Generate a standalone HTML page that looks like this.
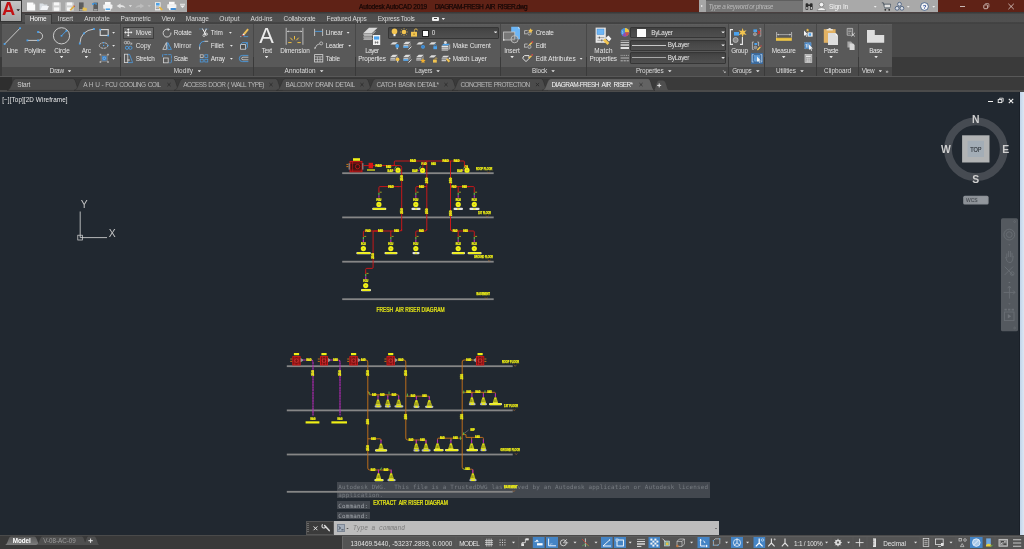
<!DOCTYPE html>
<html>
<head>
<meta charset="utf-8">
<title>Autodesk AutoCAD 2019 - DIAGRAM-FRESH AIR RISER.dwg</title>
<style>
html,body{margin:0;padding:0;}
body{width:1024px;height:549px;overflow:hidden;background:#212830;position:relative;font-family:"Liberation Sans",sans-serif;font-size:6.4px;color:#e6e6e6;}
.abs{position:absolute;}
#app{position:absolute;left:0;top:0;width:1024px;height:549px;overflow:hidden;will-change:transform;}
.t{position:absolute;white-space:nowrap;line-height:8px;height:8px;}
/* title */
#title{left:0;top:0;width:1024px;height:13px;background:#5f2216;}
#qat{left:22.2px;top:0;width:164.8px;height:12.2px;background:#a9a9a9;}
#abtn{left:0;top:0;width:22px;height:22px;background:linear-gradient(#c6c6c6,#a4a4a4);border:1px solid #353535;border-top-width:0.8px;box-sizing:border-box;}
#tabrow{left:0;top:12.4px;width:1024px;height:11.6px;background:linear-gradient(#383838 0,#3c3c3c 0.8px,#4f4f4f 2.4px,#505050 9.6px,#424242 10.6px,#424242 11.6px);}
#ribbon{left:0;top:24px;width:1024px;height:52.4px;background:#484848;}
.panel{position:absolute;top:24px;height:42.8px;background:linear-gradient(#606060 0,#595959 1.6px,#595959 100%);}
.ptitle{position:absolute;top:66.8px;height:9px;background:#494949;}
.pt{position:absolute;top:67px;line-height:8px;height:8px;white-space:nowrap;color:#dcdcdc;}
.dd{position:absolute;width:3.6px;height:2.1px;margin-left:-0.1px;background:#e6e6e6;clip-path:polygon(0 0,100% 0,50% 100%);}
#filetabs{left:0;top:76px;width:1024px;height:16.4px;background:linear-gradient(#585858 0,#585858 1px,#3a3a3a 1.2px);}
#draw{left:0;top:92.4px;width:1024px;height:443px;background:#212830;}
#status{left:0;top:535.3px;width:1024px;height:13.7px;background:linear-gradient(#4a4a4a 0,#4a4a4a 0.8px,#393939 1px);}
</style>
</head>
<body>
<div id="app">

<!-- ================= DRAWING AREA ================= -->
<div id="draw" class="abs"></div>
<div class="abs" style="left:337px;top:482.3px;width:373px;height:15.6px;background:rgba(88,92,98,0.62);"></div>
<div class="abs" style="left:337px;top:501.2px;width:32.5px;height:7.4px;background:rgba(88,92,98,0.62);"></div>
<div class="abs" style="left:337px;top:512px;width:32.5px;height:7.4px;background:rgba(88,92,98,0.62);"></div>
<div class="t" style="left:338.2px;top:483px;font-family:'DejaVu Sans Mono','Liberation Mono',monospace;font-size:5.9px;color:#777c82;white-space:pre;letter-spacing:0.191px">Autodesk DWG.  This file is a TrustedDWG last saved by an Autodesk application or Autodesk licensed</div>
<div class="t" style="left:338.2px;top:490.7px;font-family:'DejaVu Sans Mono','Liberation Mono',monospace;font-size:5.9px;color:#777c82;letter-spacing:0.203px">application.</div>
<div class="t" style="left:338.2px;top:501.5px;font-family:'DejaVu Sans Mono','Liberation Mono',monospace;font-size:5.9px;color:#777c82;color:#a0a5ab;letter-spacing:0.203px">Command:</div>
<div class="t" style="left:338.2px;top:512.3px;font-family:'DejaVu Sans Mono','Liberation Mono',monospace;font-size:5.9px;color:#777c82;color:#a0a5ab;letter-spacing:0.203px">Command:</div>
<!--DIAGRAM-START-->
<svg class="abs" style="left:280px;top:150px;" width="250" height="370" viewBox="280 150 250 370" font-family="Liberation Sans, sans-serif">
<rect x="342.2" y="172.29999999999998" width="151.5" height="1.8" fill="#868686"/>
<rect x="342.2" y="216.5" width="151.5" height="1.8" fill="#868686"/>
<rect x="342.2" y="260.8" width="151.5" height="1.8" fill="#868686"/>
<rect x="342.2" y="298.3" width="151.5" height="1.8" fill="#868686"/>
<rect x="350" y="161.4" width="12" height="10.4" fill="#3a1212" stroke="#d81616" stroke-width="0.9"/>
<path d="M352.6 161.4 v10.4 M350 163 h12 M350 170.2 h12" stroke="#d81616" stroke-width="0.6"/>
<circle cx="357.6" cy="166.6" r="2.2" fill="none" stroke="#d81616" stroke-width="0.7"/>
<rect x="348.6" y="163.2" width="1.2" height="6.4" fill="#8a8a8a"/><rect x="362.2" y="163.2" width="1.2" height="6.4" fill="#8a8a8a"/>
<path d="M346.4 164.4 h2 M346.4 166.6 h2" stroke="#d07818" stroke-width="1"/>
<rect x="353" y="158.2" width="7" height="2.6" fill="#f0f016"/>
<path d="M363.4 165.6 L394.3 165.6" fill="none" stroke="#d81616" stroke-width="0.9" stroke-linejoin="round"/>
<rect x="368.6" y="162.8" width="4.4" height="5.6" fill="#d81616"/>
<rect x="367" y="169.4" width="8" height="1.2" fill="#f0f016"/>
<rect x="375.52000000000004" y="164.65" width="6.16" height="1.9" fill="#f0f016" fill-opacity="0.45"/>
<text x="378.6" y="166.6" text-anchor="middle" font-size="2.9" font-weight="bold" fill="#f0f016" stroke="#f0f016" stroke-width="0.2" textLength="6.16" lengthAdjust="spacingAndGlyphs">FAD</text>
<path d="M394.3 165.6 V162 Q394.3 161 395.3 161 H463.4 Q464.4 161 464.4 162 V167.4" fill="none" stroke="#d81616" stroke-width="0.9"/>
<path d="M386 165.6 H399.7 Q401.7 165.6 401.7 167.6 V231.2" fill="none" stroke="#d81616" stroke-width="0.9"/>
<path d="M426.8 161 L426.8 230.2" fill="none" stroke="#d81616" stroke-width="0.9" stroke-linejoin="round"/>
<path d="M450.5 161 L450.5 230.2" fill="none" stroke="#d81616" stroke-width="0.9" stroke-linejoin="round"/>
<rect x="409.92" y="160.05" width="6.16" height="1.9" fill="#f0f016" fill-opacity="0.45"/>
<text x="413" y="162.0" text-anchor="middle" font-size="2.9" font-weight="bold" fill="#f0f016" stroke="#f0f016" stroke-width="0.2" textLength="6.16" lengthAdjust="spacingAndGlyphs">FAD</text>
<rect x="442.52000000000004" y="160.05" width="6.16" height="1.9" fill="#f0f016" fill-opacity="0.45"/>
<text x="445.6" y="162.0" text-anchor="middle" font-size="2.9" font-weight="bold" fill="#f0f016" stroke="#f0f016" stroke-width="0.2" textLength="6.16" lengthAdjust="spacingAndGlyphs">FAD</text>
<rect x="453.78400000000005" y="160.05" width="5.632000000000001" height="1.9" fill="#f0f016" fill-opacity="0.45"/>
<text x="456.6" y="162.0" text-anchor="middle" font-size="2.9" font-weight="bold" fill="#f0f016" stroke="#f0f016" stroke-width="0.2" textLength="5.632000000000001" lengthAdjust="spacingAndGlyphs">FAD</text>
<circle cx="398" cy="170.2" r="2.6" fill="#f0f016"/><circle cx="398" cy="170.2" r="0.7" fill="#b4b430"/>
<path d="M394.6 168.6 l1.6 -2.4" stroke="#58b848" stroke-width="1"/><path d="M393.8 171.0 l1 -1.6" stroke="#b52ab6" stroke-width="1"/>
<circle cx="422.6" cy="170.4" r="2.6" fill="#f0f016"/><circle cx="422.6" cy="170.4" r="0.7" fill="#b4b430"/>
<path d="M419.20000000000005 168.8 l1.6 -2.4" stroke="#58b848" stroke-width="1"/><path d="M418.40000000000003 171.20000000000002 l1 -1.6" stroke="#b52ab6" stroke-width="1"/>
<circle cx="467" cy="170.2" r="2.6" fill="#f0f016"/><circle cx="467" cy="170.2" r="0.7" fill="#b4b430"/>
<path d="M463.6 168.6 l1.6 -2.4" stroke="#58b848" stroke-width="1"/><path d="M462.8 171.0 l1 -1.6" stroke="#b52ab6" stroke-width="1"/>
<rect x="385.96000000000004" y="166.25" width="5.28" height="1.9" fill="#f0f016" fill-opacity="0.45"/>
<text x="388.6" y="168.2" text-anchor="middle" font-size="2.9" font-weight="bold" fill="#f0f016" stroke="#f0f016" stroke-width="0.2" textLength="5.28" lengthAdjust="spacingAndGlyphs">FAD</text>
<rect x="387.584" y="170.45000000000002" width="5.632000000000001" height="1.9" fill="#f0f016" fill-opacity="0.45"/>
<text x="390.4" y="172.4" text-anchor="middle" font-size="2.9" font-weight="bold" fill="#f0f016" stroke="#f0f016" stroke-width="0.2" textLength="5.632000000000001" lengthAdjust="spacingAndGlyphs">EAF</text>
<rect x="421.536" y="163.05" width="4.928" height="1.9" fill="#f0f016" fill-opacity="0.45"/>
<text x="424" y="165.0" text-anchor="middle" font-size="2.9" font-weight="bold" fill="#f0f016" stroke="#f0f016" stroke-width="0.2" textLength="4.928" lengthAdjust="spacingAndGlyphs">FAD</text>
<rect x="431.136" y="163.25" width="4.928" height="1.9" fill="#f0f016" fill-opacity="0.45"/>
<text x="433.6" y="165.2" text-anchor="middle" font-size="2.9" font-weight="bold" fill="#f0f016" stroke="#f0f016" stroke-width="0.2" textLength="4.928" lengthAdjust="spacingAndGlyphs">FAD</text>
<rect x="412.184" y="170.45000000000002" width="5.632000000000001" height="1.9" fill="#f0f016" fill-opacity="0.45"/>
<text x="415" y="172.4" text-anchor="middle" font-size="2.9" font-weight="bold" fill="#f0f016" stroke="#f0f016" stroke-width="0.2" textLength="5.632000000000001" lengthAdjust="spacingAndGlyphs">EAF</text>
<rect x="457.184" y="170.45000000000002" width="5.632000000000001" height="1.9" fill="#f0f016" fill-opacity="0.45"/>
<text x="460" y="172.4" text-anchor="middle" font-size="2.9" font-weight="bold" fill="#f0f016" stroke="#f0f016" stroke-width="0.2" textLength="5.632000000000001" lengthAdjust="spacingAndGlyphs">EAF</text>
<rect x="464.816" y="165.65" width="3.168" height="1.9" fill="#f0f016" fill-opacity="0.45"/>
<text x="466.4" y="167.6" text-anchor="middle" font-size="2.9" font-weight="bold" fill="#f0f016" stroke="#f0f016" stroke-width="0.2" textLength="3.168" lengthAdjust="spacingAndGlyphs">FA</text>
<path d="M422.6 168 L423.4 162.4" fill="none" stroke="#d81616" stroke-width="0.7" stroke-linejoin="round"/>
<path d="M466.4 168 L464.4 165" fill="none" stroke="#d81616" stroke-width="0.7" stroke-linejoin="round"/>
<rect x="400.7" y="175.24" width="2" height="5.5200000000000005" fill="#f0f016" fill-opacity="0.5"/>
<text transform="translate(402.84999999999997 178) rotate(-90)" text-anchor="middle" font-size="2.9" font-weight="bold" fill="#f0f016" stroke="#f0f016" stroke-width="0.2" textLength="5.5200000000000005" lengthAdjust="spacingAndGlyphs">250</text>
<rect x="425.8" y="177.64000000000001" width="2" height="5.5200000000000005" fill="#f0f016" fill-opacity="0.5"/>
<text transform="translate(427.95 180.4) rotate(-90)" text-anchor="middle" font-size="2.9" font-weight="bold" fill="#f0f016" stroke="#f0f016" stroke-width="0.2" textLength="5.5200000000000005" lengthAdjust="spacingAndGlyphs">250</text>
<rect x="449.5" y="177.64000000000001" width="2" height="5.5200000000000005" fill="#f0f016" fill-opacity="0.5"/>
<text transform="translate(451.65 180.4) rotate(-90)" text-anchor="middle" font-size="2.9" font-weight="bold" fill="#f0f016" stroke="#f0f016" stroke-width="0.2" textLength="5.5200000000000005" lengthAdjust="spacingAndGlyphs">250</text>
<rect x="400.7" y="208.24" width="2" height="5.5200000000000005" fill="#f0f016" fill-opacity="0.5"/>
<text transform="translate(402.84999999999997 211) rotate(-90)" text-anchor="middle" font-size="2.9" font-weight="bold" fill="#f0f016" stroke="#f0f016" stroke-width="0.2" textLength="5.5200000000000005" lengthAdjust="spacingAndGlyphs">250</text>
<rect x="425.8" y="208.44" width="2" height="5.5200000000000005" fill="#f0f016" fill-opacity="0.5"/>
<text transform="translate(427.95 211.2) rotate(-90)" text-anchor="middle" font-size="2.9" font-weight="bold" fill="#f0f016" stroke="#f0f016" stroke-width="0.2" textLength="5.5200000000000005" lengthAdjust="spacingAndGlyphs">250</text>
<rect x="449.5" y="210.44" width="2" height="5.5200000000000005" fill="#f0f016" fill-opacity="0.5"/>
<text transform="translate(451.65 213.2) rotate(-90)" text-anchor="middle" font-size="2.9" font-weight="bold" fill="#f0f016" stroke="#f0f016" stroke-width="0.2" textLength="5.5200000000000005" lengthAdjust="spacingAndGlyphs">250</text>
<path d="M401.7 186.6 H379.9 Q378.9 186.6 378.9 187.6 V191.4" fill="none" stroke="#d81616" stroke-width="0.9"/>
<path d="M426.8 186.6 H416.8 Q415.8 186.6 415.8 187.6 V191.4" fill="none" stroke="#d81616" stroke-width="0.9"/>
<path d="M450.5 186.6 H473.3 Q474.3 186.6 474.3 187.6 V191.4 M458.2 186.6 V191.4" fill="none" stroke="#d81616" stroke-width="0.9"/>
<rect x="388.36" y="185.65" width="5.28" height="1.9" fill="#f0f016" fill-opacity="0.45"/>
<text x="391" y="187.6" text-anchor="middle" font-size="2.9" font-weight="bold" fill="#f0f016" stroke="#f0f016" stroke-width="0.2" textLength="5.28" lengthAdjust="spacingAndGlyphs">FAD</text>
<rect x="418.96000000000004" y="185.85000000000002" width="5.28" height="1.9" fill="#f0f016" fill-opacity="0.45"/>
<text x="421.6" y="187.8" text-anchor="middle" font-size="2.9" font-weight="bold" fill="#f0f016" stroke="#f0f016" stroke-width="0.2" textLength="5.28" lengthAdjust="spacingAndGlyphs">FAD</text>
<rect x="451.712" y="185.65" width="4.5760000000000005" height="1.9" fill="#f0f016" fill-opacity="0.45"/>
<text x="454" y="187.6" text-anchor="middle" font-size="2.9" font-weight="bold" fill="#f0f016" stroke="#f0f016" stroke-width="0.2" textLength="4.5760000000000005" lengthAdjust="spacingAndGlyphs">FAD</text>
<rect x="462.136" y="185.65" width="4.928" height="1.9" fill="#f0f016" fill-opacity="0.45"/>
<text x="464.6" y="187.6" text-anchor="middle" font-size="2.9" font-weight="bold" fill="#f0f016" stroke="#f0f016" stroke-width="0.2" textLength="4.928" lengthAdjust="spacingAndGlyphs">FAD</text>
<path d="M396.6 186.6 l1.8 -0.9 v1.8 Z M470 186.6 l-1.8 -0.9 v1.8 Z" fill="#d81616"/>
<path d="M378.9 190.6 v2.2" stroke="#d81616" stroke-width="0.9"/>
<path d="M378.9 192.79999999999998 v2.4" stroke="#58b848" stroke-width="1.2"/>
<path d="M378.9 195.2 v2.6" stroke="#b52ab6" stroke-width="1.2"/>
<path d="M379.7 192.2 h2" stroke="#f0f016" stroke-width="0.6"/>
<rect x="376.436" y="199.05" width="4.928" height="1.9" fill="#f0f016" fill-opacity="0.45"/>
<text x="378.9" y="201.0" text-anchor="middle" font-size="2.9" font-weight="bold" fill="#f0f016" stroke="#f0f016" stroke-width="0.2" textLength="4.928" lengthAdjust="spacingAndGlyphs">FCU</text>
<circle cx="378.9" cy="204.4" r="2.6" fill="#f0f016"/>
<circle cx="378.9" cy="204.4" r="0.7" fill="#b4b430"/>
<rect x="372.2" y="207.8" width="14.100000000000023" height="2.2" rx="1" fill="#e6e6d0"/>
<rect x="373.0" y="208.0" width="12.500000000000023" height="1.8" fill="#f0f016"/>
<path d="M415.8 190.6 v2.2" stroke="#d81616" stroke-width="0.9"/>
<path d="M415.8 192.79999999999998 v2.4" stroke="#58b848" stroke-width="1.2"/>
<path d="M415.8 195.2 v2.6" stroke="#b52ab6" stroke-width="1.2"/>
<path d="M416.6 192.2 h2" stroke="#f0f016" stroke-width="0.6"/>
<rect x="413.336" y="199.05" width="4.928" height="1.9" fill="#f0f016" fill-opacity="0.45"/>
<text x="415.8" y="201.0" text-anchor="middle" font-size="2.9" font-weight="bold" fill="#f0f016" stroke="#f0f016" stroke-width="0.2" textLength="4.928" lengthAdjust="spacingAndGlyphs">FCU</text>
<circle cx="415.8" cy="204.4" r="2.6" fill="#f0f016"/>
<circle cx="415.8" cy="204.4" r="0.7" fill="#b4b430"/>
<rect x="411.4" y="207.8" width="9.200000000000045" height="2.2" rx="1.1" fill="#e4e4e4"/>
<rect x="414.8" y="208.20000000000002" width="2.4" height="1.4" fill="#f0f016"/>
<path d="M458.2 190.6 v2.2" stroke="#d81616" stroke-width="0.9"/>
<path d="M458.2 192.79999999999998 v2.4" stroke="#58b848" stroke-width="1.2"/>
<path d="M458.2 195.2 v2.6" stroke="#b52ab6" stroke-width="1.2"/>
<path d="M459.0 192.2 h2" stroke="#f0f016" stroke-width="0.6"/>
<rect x="455.736" y="199.05" width="4.928" height="1.9" fill="#f0f016" fill-opacity="0.45"/>
<text x="458.2" y="201.0" text-anchor="middle" font-size="2.9" font-weight="bold" fill="#f0f016" stroke="#f0f016" stroke-width="0.2" textLength="4.928" lengthAdjust="spacingAndGlyphs">FCU</text>
<circle cx="458.2" cy="204.4" r="2.6" fill="#f0f016"/>
<circle cx="458.2" cy="204.4" r="0.7" fill="#b4b430"/>
<rect x="453.5" y="207.8" width="9.5" height="2.2" rx="1.1" fill="#e4e4e4"/>
<rect x="457.05" y="208.20000000000002" width="2.4" height="1.4" fill="#f0f016"/>
<path d="M474.3 190.6 v2.2" stroke="#d81616" stroke-width="0.9"/>
<path d="M474.3 192.79999999999998 v2.4" stroke="#58b848" stroke-width="1.2"/>
<path d="M474.3 195.2 v2.6" stroke="#b52ab6" stroke-width="1.2"/>
<path d="M475.1 192.2 h2" stroke="#f0f016" stroke-width="0.6"/>
<rect x="471.836" y="199.05" width="4.928" height="1.9" fill="#f0f016" fill-opacity="0.45"/>
<text x="474.3" y="201.0" text-anchor="middle" font-size="2.9" font-weight="bold" fill="#f0f016" stroke="#f0f016" stroke-width="0.2" textLength="4.928" lengthAdjust="spacingAndGlyphs">FCU</text>
<circle cx="474.3" cy="204.4" r="2.6" fill="#f0f016"/>
<circle cx="474.3" cy="204.4" r="0.7" fill="#b4b430"/>
<rect x="469.4" y="207.8" width="10.200000000000045" height="2.2" rx="1.1" fill="#e4e4e4"/>
<rect x="473.3" y="208.20000000000002" width="2.4" height="1.4" fill="#f0f016"/>
<path d="M401.7 229 Q401.7 231 399.7 231 H364.4 Q363.4 231 363.4 232 V235.6 M390.8 231 V235.6" fill="none" stroke="#d81616" stroke-width="0.9"/>
<path d="M426.8 229 Q426.8 231 424.8 231 H416.8 Q415.8 231 415.8 232 V235.6" fill="none" stroke="#d81616" stroke-width="0.9"/>
<path d="M450.5 229 Q450.5 231 452.5 231 H473.3 Q474.3 231 474.3 232 V235.6 M458.2 231 V235.6" fill="none" stroke="#d81616" stroke-width="0.9"/>
<path d="M378 231 H374.1 Q373.1 231 373.1 232 V267.4 Q373.1 268.4 372.1 268.4 H366.7 Q365.7 268.4 365.7 269.4 V272.6" fill="none" stroke="#d81616" stroke-width="0.9"/>
<rect x="365.536" y="230.05" width="4.928" height="1.9" fill="#f0f016" fill-opacity="0.45"/>
<text x="368" y="232.0" text-anchor="middle" font-size="2.9" font-weight="bold" fill="#f0f016" stroke="#f0f016" stroke-width="0.2" textLength="4.928" lengthAdjust="spacingAndGlyphs">FAD</text>
<rect x="378.048" y="230.05" width="5.104" height="1.9" fill="#f0f016" fill-opacity="0.45"/>
<text x="380.6" y="232.0" text-anchor="middle" font-size="2.9" font-weight="bold" fill="#f0f016" stroke="#f0f016" stroke-width="0.2" textLength="5.104" lengthAdjust="spacingAndGlyphs">FAD</text>
<rect x="394.136" y="230.05" width="4.928" height="1.9" fill="#f0f016" fill-opacity="0.45"/>
<text x="396.6" y="232.0" text-anchor="middle" font-size="2.9" font-weight="bold" fill="#f0f016" stroke="#f0f016" stroke-width="0.2" textLength="4.928" lengthAdjust="spacingAndGlyphs">FAD</text>
<rect x="418.936" y="230.05" width="4.928" height="1.9" fill="#f0f016" fill-opacity="0.45"/>
<text x="421.4" y="232.0" text-anchor="middle" font-size="2.9" font-weight="bold" fill="#f0f016" stroke="#f0f016" stroke-width="0.2" textLength="4.928" lengthAdjust="spacingAndGlyphs">FAD</text>
<rect x="452.712" y="230.05" width="4.5760000000000005" height="1.9" fill="#f0f016" fill-opacity="0.45"/>
<text x="455" y="232.0" text-anchor="middle" font-size="2.9" font-weight="bold" fill="#f0f016" stroke="#f0f016" stroke-width="0.2" textLength="4.5760000000000005" lengthAdjust="spacingAndGlyphs">FAD</text>
<rect x="463.136" y="230.05" width="4.928" height="1.9" fill="#f0f016" fill-opacity="0.45"/>
<text x="465.6" y="232.0" text-anchor="middle" font-size="2.9" font-weight="bold" fill="#f0f016" stroke="#f0f016" stroke-width="0.2" textLength="4.928" lengthAdjust="spacingAndGlyphs">FAD</text>
<path d="M363.4 234.8 v2.2" stroke="#d81616" stroke-width="0.9"/>
<path d="M363.4 237.0 v2.4" stroke="#58b848" stroke-width="1.2"/>
<path d="M363.4 239.4 v2.6" stroke="#b52ab6" stroke-width="1.2"/>
<path d="M364.2 236.4 h2" stroke="#f0f016" stroke-width="0.6"/>
<rect x="360.936" y="243.25000000000003" width="4.928" height="1.9" fill="#f0f016" fill-opacity="0.45"/>
<text x="363.4" y="245.20000000000002" text-anchor="middle" font-size="2.9" font-weight="bold" fill="#f0f016" stroke="#f0f016" stroke-width="0.2" textLength="4.928" lengthAdjust="spacingAndGlyphs">FCU</text>
<circle cx="363.4" cy="248.60000000000002" r="2.6" fill="#f0f016"/>
<circle cx="363.4" cy="248.60000000000002" r="0.7" fill="#b4b430"/>
<rect x="356.3" y="252.00000000000003" width="14.5" height="2.2" rx="1" fill="#e6e6d0"/>
<rect x="357.1" y="252.20000000000002" width="12.9" height="1.8" fill="#f0f016"/>
<path d="M390.8 234.8 v2.2" stroke="#d81616" stroke-width="0.9"/>
<path d="M390.8 237.0 v2.4" stroke="#58b848" stroke-width="1.2"/>
<path d="M390.8 239.4 v2.6" stroke="#b52ab6" stroke-width="1.2"/>
<path d="M391.6 236.4 h2" stroke="#f0f016" stroke-width="0.6"/>
<rect x="388.336" y="243.25000000000003" width="4.928" height="1.9" fill="#f0f016" fill-opacity="0.45"/>
<text x="390.8" y="245.20000000000002" text-anchor="middle" font-size="2.9" font-weight="bold" fill="#f0f016" stroke="#f0f016" stroke-width="0.2" textLength="4.928" lengthAdjust="spacingAndGlyphs">FCU</text>
<circle cx="390.8" cy="248.60000000000002" r="2.6" fill="#f0f016"/>
<circle cx="390.8" cy="248.60000000000002" r="0.7" fill="#b4b430"/>
<rect x="384.5" y="252.00000000000003" width="13.0" height="2.2" rx="1" fill="#e6e6d0"/>
<rect x="385.3" y="252.20000000000002" width="11.4" height="1.8" fill="#f0f016"/>
<path d="M415.8 234.8 v2.2" stroke="#d81616" stroke-width="0.9"/>
<path d="M415.8 237.0 v2.4" stroke="#58b848" stroke-width="1.2"/>
<path d="M415.8 239.4 v2.6" stroke="#b52ab6" stroke-width="1.2"/>
<path d="M416.6 236.4 h2" stroke="#f0f016" stroke-width="0.6"/>
<rect x="413.336" y="243.25000000000003" width="4.928" height="1.9" fill="#f0f016" fill-opacity="0.45"/>
<text x="415.8" y="245.20000000000002" text-anchor="middle" font-size="2.9" font-weight="bold" fill="#f0f016" stroke="#f0f016" stroke-width="0.2" textLength="4.928" lengthAdjust="spacingAndGlyphs">FCU</text>
<circle cx="415.8" cy="248.60000000000002" r="2.6" fill="#f0f016"/>
<circle cx="415.8" cy="248.60000000000002" r="0.7" fill="#b4b430"/>
<rect x="412.4" y="252.00000000000003" width="7.2000000000000455" height="2.2" rx="1.1" fill="#e4e4e4"/>
<rect x="414.8" y="252.40000000000003" width="2.4" height="1.4" fill="#f0f016"/>
<path d="M458.2 234.8 v2.2" stroke="#d81616" stroke-width="0.9"/>
<path d="M458.2 237.0 v2.4" stroke="#58b848" stroke-width="1.2"/>
<path d="M458.2 239.4 v2.6" stroke="#b52ab6" stroke-width="1.2"/>
<path d="M459.0 236.4 h2" stroke="#f0f016" stroke-width="0.6"/>
<rect x="455.736" y="243.25000000000003" width="4.928" height="1.9" fill="#f0f016" fill-opacity="0.45"/>
<text x="458.2" y="245.20000000000002" text-anchor="middle" font-size="2.9" font-weight="bold" fill="#f0f016" stroke="#f0f016" stroke-width="0.2" textLength="4.928" lengthAdjust="spacingAndGlyphs">FCU</text>
<circle cx="458.2" cy="248.60000000000002" r="2.6" fill="#f0f016"/>
<circle cx="458.2" cy="248.60000000000002" r="0.7" fill="#b4b430"/>
<rect x="451.6" y="252.00000000000003" width="13.399999999999977" height="2.2" rx="1" fill="#e6e6d0"/>
<rect x="452.40000000000003" y="252.20000000000002" width="11.799999999999978" height="1.8" fill="#f0f016"/>
<path d="M474.3 234.8 v2.2" stroke="#d81616" stroke-width="0.9"/>
<path d="M474.3 237.0 v2.4" stroke="#58b848" stroke-width="1.2"/>
<path d="M474.3 239.4 v2.6" stroke="#b52ab6" stroke-width="1.2"/>
<path d="M475.1 236.4 h2" stroke="#f0f016" stroke-width="0.6"/>
<rect x="471.836" y="243.25000000000003" width="4.928" height="1.9" fill="#f0f016" fill-opacity="0.45"/>
<text x="474.3" y="245.20000000000002" text-anchor="middle" font-size="2.9" font-weight="bold" fill="#f0f016" stroke="#f0f016" stroke-width="0.2" textLength="4.928" lengthAdjust="spacingAndGlyphs">FCU</text>
<circle cx="474.3" cy="248.60000000000002" r="2.6" fill="#f0f016"/>
<circle cx="474.3" cy="248.60000000000002" r="0.7" fill="#b4b430"/>
<rect x="467.6" y="252.00000000000003" width="14.0" height="2.2" rx="1" fill="#e6e6d0"/>
<rect x="468.40000000000003" y="252.20000000000002" width="12.4" height="1.8" fill="#f0f016"/>
<rect x="372.1" y="253.24" width="2" height="5.5200000000000005" fill="#f0f016" fill-opacity="0.5"/>
<text transform="translate(374.25 256) rotate(-90)" text-anchor="middle" font-size="2.9" font-weight="bold" fill="#f0f016" stroke="#f0f016" stroke-width="0.2" textLength="5.5200000000000005" lengthAdjust="spacingAndGlyphs">250</text>
<path d="M365.7 271.8 v2.2" stroke="#d81616" stroke-width="0.9"/>
<path d="M365.7 274.0 v2.4" stroke="#58b848" stroke-width="1.2"/>
<path d="M365.7 276.40000000000003 v2.6" stroke="#b52ab6" stroke-width="1.2"/>
<path d="M366.5 273.40000000000003 h2" stroke="#f0f016" stroke-width="0.6"/>
<rect x="363.236" y="280.25" width="4.928" height="1.9" fill="#f0f016" fill-opacity="0.45"/>
<text x="365.7" y="282.2" text-anchor="middle" font-size="2.9" font-weight="bold" fill="#f0f016" stroke="#f0f016" stroke-width="0.2" textLength="4.928" lengthAdjust="spacingAndGlyphs">FCU</text>
<circle cx="365.7" cy="285.6" r="2.6" fill="#f0f016"/>
<circle cx="365.7" cy="285.6" r="0.7" fill="#b4b430"/>
<rect x="361" y="289.0" width="10" height="2.2" rx="1" fill="#e6e6d0"/>
<rect x="361.8" y="289.20000000000005" width="8.4" height="1.8" fill="#f0f016"/>
<text x="476" y="169.5" font-size="3.2" font-weight="bold" fill="#f0f016" stroke="#f0f016" stroke-width="0.25" textLength="16.399999999999977" lengthAdjust="spacingAndGlyphs">ROOF FLOOR</text>
<path d="M487.4 171.6 l1.2 1.6 l1.2 -1.6" fill="none" stroke="#b06a30" stroke-width="0.5"/>
<text x="478" y="213.5" font-size="3.2" font-weight="bold" fill="#f0f016" stroke="#f0f016" stroke-width="0.25" textLength="13" lengthAdjust="spacingAndGlyphs">1ST FLOOR</text>
<path d="M486 215.6 l1.2 1.6 l1.2 -1.6" fill="none" stroke="#b06a30" stroke-width="0.5"/>
<text x="474" y="257.70000000000005" font-size="3.2" font-weight="bold" fill="#f0f016" stroke="#f0f016" stroke-width="0.25" textLength="19" lengthAdjust="spacingAndGlyphs">GROUND FLOOR</text>
<path d="M488 259.8 l1.2 1.6 l1.2 -1.6" fill="none" stroke="#b06a30" stroke-width="0.5"/>
<text x="476.6" y="295.3" font-size="3.2" font-weight="bold" fill="#f0f016" stroke="#f0f016" stroke-width="0.25" textLength="13.399999999999977" lengthAdjust="spacingAndGlyphs">BASEMENT</text>
<path d="M485 297.4 l1.2 1.6 l1.2 -1.6" fill="none" stroke="#b06a30" stroke-width="0.5"/>
<text x="376.4" y="311.7" font-size="6.6" fill="#f0f016" stroke="#f0f016" stroke-width="0.22" textLength="68.2" lengthAdjust="spacingAndGlyphs" style="white-space:pre">FRESH  AIR RISER DIAGRAM</text>
<rect x="286.8" y="365.3" width="225.90000000000003" height="1.8" fill="#868686"/>
<rect x="286.8" y="409.5" width="225.90000000000003" height="1.8" fill="#868686"/>
<rect x="286.8" y="453.6" width="225.90000000000003" height="1.8" fill="#868686"/>
<rect x="286.8" y="490.90000000000003" width="225.90000000000003" height="1.8" fill="#868686"/>
<rect x="292.8" y="356.6" width="7.399999999999977" height="8.4" fill="#7a1212" stroke="#d81616" stroke-width="0.9"/>
<path d="M294.8 356.6 v8.4 M298.2 356.6 v8.4" stroke="#e03030" stroke-width="0.5"/>
<circle cx="296.5" cy="360.6" r="1.8" fill="none" stroke="#e04040" stroke-width="0.6"/>
<rect x="293.9" y="353" width="5.2" height="2.2" fill="#f0f016"/>
<path d="M300.59999999999997 358 l2.4 1.4 v1.4 l-2.4 1.4 Z" fill="#9a9a9a"/>
<path d="M290.2 359 h2 M290.2 361.4 h2" stroke="#d07818" stroke-width="0.9"/>
<rect x="320.4" y="356.6" width="7.2000000000000455" height="8.4" fill="#7a1212" stroke="#d81616" stroke-width="0.9"/>
<path d="M322.4 356.6 v8.4 M325.6 356.6 v8.4" stroke="#e03030" stroke-width="0.5"/>
<circle cx="324.0" cy="360.6" r="1.8" fill="none" stroke="#e04040" stroke-width="0.6"/>
<rect x="321.4" y="353" width="5.2" height="2.2" fill="#f0f016"/>
<path d="M328.0 358 l2.4 1.4 v1.4 l-2.4 1.4 Z" fill="#9a9a9a"/>
<path d="M317.79999999999995 359 h2 M317.79999999999995 361.4 h2" stroke="#d07818" stroke-width="0.9"/>
<rect x="349.8" y="356.6" width="7.599999999999966" height="8.4" fill="#7a1212" stroke="#d81616" stroke-width="0.9"/>
<path d="M351.8 356.6 v8.4 M355.4 356.6 v8.4" stroke="#e03030" stroke-width="0.5"/>
<circle cx="353.6" cy="360.6" r="1.8" fill="none" stroke="#e04040" stroke-width="0.6"/>
<rect x="351.0" y="353" width="5.2" height="2.2" fill="#f0f016"/>
<path d="M357.79999999999995 358 l2.4 1.4 v1.4 l-2.4 1.4 Z" fill="#9a9a9a"/>
<path d="M347.2 359 h2 M347.2 361.4 h2" stroke="#d07818" stroke-width="0.9"/>
<rect x="387" y="356.6" width="7.399999999999977" height="8.4" fill="#7a1212" stroke="#d81616" stroke-width="0.9"/>
<path d="M389 356.6 v8.4 M392.4 356.6 v8.4" stroke="#e03030" stroke-width="0.5"/>
<circle cx="390.7" cy="360.6" r="1.8" fill="none" stroke="#e04040" stroke-width="0.6"/>
<rect x="388.09999999999997" y="353" width="5.2" height="2.2" fill="#f0f016"/>
<path d="M394.79999999999995 358 l2.4 1.4 v1.4 l-2.4 1.4 Z" fill="#9a9a9a"/>
<path d="M384.4 359 h2 M384.4 361.4 h2" stroke="#d07818" stroke-width="0.9"/>
<rect x="476.4" y="356.6" width="7.400000000000034" height="8.4" fill="#7a1212" stroke="#d81616" stroke-width="0.9"/>
<path d="M478.4 356.6 v8.4 M481.8 356.6 v8.4" stroke="#e03030" stroke-width="0.5"/>
<circle cx="480.1" cy="360.6" r="1.8" fill="none" stroke="#e04040" stroke-width="0.6"/>
<rect x="477.5" y="353" width="5.2" height="2.2" fill="#f0f016"/>
<path d="M476.0 358 l-2.4 1.4 v1.4 l2.4 1.4 Z" fill="#9a9a9a"/>
<path d="M484.40000000000003 359 h2 M484.40000000000003 361.4 h2" stroke="#d07818" stroke-width="0.9"/>
<path d="M303 360 H311 Q313 360 313 362 V415.6" fill="none" stroke="#b52ab6" stroke-width="1.15" stroke-dasharray="2.4 0.3"/>
<path d="M330.4 360 H338 Q340 360 340 362 V415.6" fill="none" stroke="#b52ab6" stroke-width="1.15" stroke-dasharray="2.4 0.3"/>
<path d="M360.2 360 H365.8 Q367.8 360 367.8 362 V468 Q367.8 470 369.8 470 H390.2 Q391.2 470 391.2 471 V474 M378.5 470 V474" fill="none" stroke="#cc7418" stroke-width="0.9"/>
<path d="M397.2 360 H403.8 Q405.8 360 405.8 362 V438 Q405.8 440 407.8 440 H425 Q426 440 426 441 V444 M416.3 440 V444" fill="none" stroke="#cc7418" stroke-width="0.9"/>
<path d="M473.6 360 H464.2 Q462.2 360 462.2 362 V467.2 Q462.2 469.2 464.2 469.2 H471.8 Q472.8 469.2 472.8 470.2 V473.6" fill="none" stroke="#cc7418" stroke-width="0.9"/>
<rect x="306.536" y="359.05" width="4.928" height="1.9" fill="#f0f016" fill-opacity="0.45"/>
<text x="309" y="361.0" text-anchor="middle" font-size="2.9" font-weight="bold" fill="#f0f016" stroke="#f0f016" stroke-width="0.2" textLength="4.928" lengthAdjust="spacingAndGlyphs">EAD</text>
<rect x="333.136" y="359.05" width="4.928" height="1.9" fill="#f0f016" fill-opacity="0.45"/>
<text x="335.6" y="361.0" text-anchor="middle" font-size="2.9" font-weight="bold" fill="#f0f016" stroke="#f0f016" stroke-width="0.2" textLength="4.928" lengthAdjust="spacingAndGlyphs">EAD</text>
<rect x="361.0" y="359.05" width="4.4" height="1.9" fill="#f0f016" fill-opacity="0.45"/>
<text x="363.2" y="361.0" text-anchor="middle" font-size="2.9" font-weight="bold" fill="#f0f016" stroke="#f0f016" stroke-width="0.2" textLength="4.4" lengthAdjust="spacingAndGlyphs">EAD</text>
<rect x="398.624" y="359.05" width="4.752000000000001" height="1.9" fill="#f0f016" fill-opacity="0.45"/>
<text x="401" y="361.0" text-anchor="middle" font-size="2.9" font-weight="bold" fill="#f0f016" stroke="#f0f016" stroke-width="0.2" textLength="4.752000000000001" lengthAdjust="spacingAndGlyphs">EAD</text>
<rect x="466.336" y="359.05" width="4.928" height="1.9" fill="#f0f016" fill-opacity="0.45"/>
<text x="468.8" y="361.0" text-anchor="middle" font-size="2.9" font-weight="bold" fill="#f0f016" stroke="#f0f016" stroke-width="0.2" textLength="4.928" lengthAdjust="spacingAndGlyphs">EAD</text>
<rect x="312" y="370.24" width="2" height="5.5200000000000005" fill="#f0f016" fill-opacity="0.5"/>
<text transform="translate(314.15 373) rotate(-90)" text-anchor="middle" font-size="2.9" font-weight="bold" fill="#f0f016" stroke="#f0f016" stroke-width="0.2" textLength="5.5200000000000005" lengthAdjust="spacingAndGlyphs">250</text>
<rect x="339" y="370.24" width="2" height="5.5200000000000005" fill="#f0f016" fill-opacity="0.5"/>
<text transform="translate(341.15 373) rotate(-90)" text-anchor="middle" font-size="2.9" font-weight="bold" fill="#f0f016" stroke="#f0f016" stroke-width="0.2" textLength="5.5200000000000005" lengthAdjust="spacingAndGlyphs">250</text>
<rect x="366.8" y="370.24" width="2" height="5.5200000000000005" fill="#f0f016" fill-opacity="0.5"/>
<text transform="translate(368.95 373) rotate(-90)" text-anchor="middle" font-size="2.9" font-weight="bold" fill="#f0f016" stroke="#f0f016" stroke-width="0.2" textLength="5.5200000000000005" lengthAdjust="spacingAndGlyphs">250</text>
<rect x="404.8" y="370.24" width="2" height="5.5200000000000005" fill="#f0f016" fill-opacity="0.5"/>
<text transform="translate(406.95 373) rotate(-90)" text-anchor="middle" font-size="2.9" font-weight="bold" fill="#f0f016" stroke="#f0f016" stroke-width="0.2" textLength="5.5200000000000005" lengthAdjust="spacingAndGlyphs">250</text>
<rect x="461.2" y="373.84000000000003" width="2" height="5.5200000000000005" fill="#f0f016" fill-opacity="0.5"/>
<text transform="translate(463.34999999999997 376.6) rotate(-90)" text-anchor="middle" font-size="2.9" font-weight="bold" fill="#f0f016" stroke="#f0f016" stroke-width="0.2" textLength="5.5200000000000005" lengthAdjust="spacingAndGlyphs">250</text>
<rect x="366.8" y="418.84000000000003" width="2" height="5.5200000000000005" fill="#f0f016" fill-opacity="0.5"/>
<text transform="translate(368.95 421.6) rotate(-90)" text-anchor="middle" font-size="2.9" font-weight="bold" fill="#f0f016" stroke="#f0f016" stroke-width="0.2" textLength="5.5200000000000005" lengthAdjust="spacingAndGlyphs">250</text>
<rect x="404.8" y="413.84000000000003" width="2" height="5.5200000000000005" fill="#f0f016" fill-opacity="0.5"/>
<text transform="translate(406.95 416.6) rotate(-90)" text-anchor="middle" font-size="2.9" font-weight="bold" fill="#f0f016" stroke="#f0f016" stroke-width="0.2" textLength="5.5200000000000005" lengthAdjust="spacingAndGlyphs">250</text>
<rect x="461.2" y="413.84000000000003" width="2" height="5.5200000000000005" fill="#f0f016" fill-opacity="0.5"/>
<text transform="translate(463.34999999999997 416.6) rotate(-90)" text-anchor="middle" font-size="2.9" font-weight="bold" fill="#f0f016" stroke="#f0f016" stroke-width="0.2" textLength="5.5200000000000005" lengthAdjust="spacingAndGlyphs">250</text>
<rect x="366.8" y="445.24" width="2" height="5.5200000000000005" fill="#f0f016" fill-opacity="0.5"/>
<text transform="translate(368.95 448) rotate(-90)" text-anchor="middle" font-size="2.9" font-weight="bold" fill="#f0f016" stroke="#f0f016" stroke-width="0.2" textLength="5.5200000000000005" lengthAdjust="spacingAndGlyphs">250</text>
<rect x="310.624" y="417.85" width="4.752000000000001" height="1.9" fill="#f0f016" fill-opacity="0.45"/>
<text x="313" y="419.8" text-anchor="middle" font-size="2.9" font-weight="bold" fill="#f0f016" stroke="#f0f016" stroke-width="0.2" textLength="4.752000000000001" lengthAdjust="spacingAndGlyphs">EAG</text>
<rect x="337.624" y="417.85" width="4.752000000000001" height="1.9" fill="#f0f016" fill-opacity="0.45"/>
<text x="340" y="419.8" text-anchor="middle" font-size="2.9" font-weight="bold" fill="#f0f016" stroke="#f0f016" stroke-width="0.2" textLength="4.752000000000001" lengthAdjust="spacingAndGlyphs">EAG</text>
<rect x="305.6" y="421.3" width="13.8" height="2.2" fill="#f0f016"/><rect x="331.4" y="421.3" width="15.6" height="2.2" fill="#f0f016"/>
<path d="M367.8 391 L369.4 394.8 H397.7 Q398.7 394.8 398.7 395.8 V396.6 M378 394.8 V396.6 M387.8 394.8 V396.6" fill="none" stroke="#cc7418" stroke-width="0.9"/>
<rect x="372.08799999999997" y="393.65000000000003" width="4.224" height="1.9" fill="#f0f016" fill-opacity="0.45"/>
<text x="374.2" y="395.6" text-anchor="middle" font-size="2.9" font-weight="bold" fill="#f0f016" stroke="#f0f016" stroke-width="0.2" textLength="4.224" lengthAdjust="spacingAndGlyphs">EAD</text>
<rect x="380.28799999999995" y="393.65000000000003" width="4.224" height="1.9" fill="#f0f016" fill-opacity="0.45"/>
<text x="382.4" y="395.6" text-anchor="middle" font-size="2.9" font-weight="bold" fill="#f0f016" stroke="#f0f016" stroke-width="0.2" textLength="4.224" lengthAdjust="spacingAndGlyphs">EAD</text>
<rect x="391.8" y="393.65000000000003" width="4.4" height="1.9" fill="#f0f016" fill-opacity="0.45"/>
<text x="394" y="395.6" text-anchor="middle" font-size="2.9" font-weight="bold" fill="#f0f016" stroke="#f0f016" stroke-width="0.2" textLength="4.4" lengthAdjust="spacingAndGlyphs">EAD</text>
<path d="M369 392 l1.2 2.6 M389 391.6 v2.4" stroke="#58b848" stroke-width="0.9"/>
<path d="M378 395.8 v3.6" stroke="#b52ab6" stroke-width="1.1"/>
<path d="M377.1 399.5 L378.9 399.5 L380.7 405.3 L375.3 405.3 Z" fill="#f0f016" fill-opacity="0.88"/>
<text x="378" y="404.40000000000003" text-anchor="middle" font-size="2.8" font-weight="bold" fill="#77771a" textLength="4" lengthAdjust="spacingAndGlyphs">EAG</text>
<rect x="374.6" y="405.3" width="7.0" height="2.2" rx="1.1" fill="#b4b8c2"/><rect x="376.40000000000003" y="405.6" width="3.4" height="1.6" fill="#f0f016"/>
<path d="M387.8 395.8 v3.6" stroke="#b52ab6" stroke-width="1.1"/>
<path d="M386.90000000000003 399.5 L388.7 399.5 L390.5 405.3 L385.1 405.3 Z" fill="#f0f016" fill-opacity="0.88"/>
<text x="387.8" y="404.40000000000003" text-anchor="middle" font-size="2.8" font-weight="bold" fill="#77771a" textLength="4" lengthAdjust="spacingAndGlyphs">EAG</text>
<rect x="384.8" y="405.3" width="6.0" height="2.2" rx="1.1" fill="#b4b8c2"/><rect x="386.6" y="405.6" width="2.4" height="1.6" fill="#f0f016"/>
<path d="M398.7 395.8 v3.6" stroke="#b52ab6" stroke-width="1.1"/>
<path d="M397.8 399.5 L399.59999999999997 399.5 L401.4 405.3 L396.0 405.3 Z" fill="#f0f016" fill-opacity="0.88"/>
<text x="398.7" y="404.40000000000003" text-anchor="middle" font-size="2.8" font-weight="bold" fill="#77771a" textLength="4" lengthAdjust="spacingAndGlyphs">EAG</text>
<rect x="394.4" y="405.3" width="9.0" height="2.2" rx="1.1" fill="#b4b8c2"/><rect x="396.2" y="405.6" width="5.4" height="1.6" fill="#f0f016"/>
<path d="M405.8 396.2 H428.3 Q429.3 396.2 429.3 397.2 V398 M416.4 396.2 V398" fill="none" stroke="#cc7418" stroke-width="0.9"/>
<path d="M407.4 393.6 v3" stroke="#58b848" stroke-width="1"/>
<rect x="410.8" y="395.05" width="4.4" height="1.9" fill="#f0f016" fill-opacity="0.45"/>
<text x="413" y="397.0" text-anchor="middle" font-size="2.9" font-weight="bold" fill="#f0f016" stroke="#f0f016" stroke-width="0.2" textLength="4.4" lengthAdjust="spacingAndGlyphs">EAD</text>
<rect x="422.40000000000003" y="395.05" width="4.4" height="1.9" fill="#f0f016" fill-opacity="0.45"/>
<text x="424.6" y="397.0" text-anchor="middle" font-size="2.9" font-weight="bold" fill="#f0f016" stroke="#f0f016" stroke-width="0.2" textLength="4.4" lengthAdjust="spacingAndGlyphs">EAD</text>
<path d="M416.4 396.2 v3.6" stroke="#b52ab6" stroke-width="1.1"/>
<path d="M415.5 399.9 L417.29999999999995 399.9 L419.09999999999997 405.7 L413.7 405.7 Z" fill="#f0f016" fill-opacity="0.88"/>
<text x="416.4" y="404.8" text-anchor="middle" font-size="2.8" font-weight="bold" fill="#77771a" textLength="4" lengthAdjust="spacingAndGlyphs">EAG</text>
<rect x="413.4" y="405.7" width="6.2000000000000455" height="2.2" rx="1.1" fill="#b4b8c2"/><rect x="415.2" y="406.0" width="2.6000000000000454" height="1.6" fill="#f0f016"/>
<path d="M429.3 396.2 v3.6" stroke="#b52ab6" stroke-width="1.1"/>
<path d="M428.40000000000003 399.9 L430.2 399.9 L432.0 405.7 L426.6 405.7 Z" fill="#f0f016" fill-opacity="0.88"/>
<text x="429.3" y="404.8" text-anchor="middle" font-size="2.8" font-weight="bold" fill="#77771a" textLength="4" lengthAdjust="spacingAndGlyphs">EAG</text>
<rect x="425" y="405.7" width="8.399999999999977" height="2.2" rx="1.1" fill="#b4b8c2"/><rect x="426.8" y="406.0" width="4.799999999999978" height="1.6" fill="#f0f016"/>
<path d="M462.2 392.3 H494.4 Q495.4 392.3 495.4 393.3 V394 M471.9 392.3 V394 M483.4 392.3 V394" fill="none" stroke="#cc7418" stroke-width="0.9"/>
<path d="M463.8 390.6 v3 M485 390.4 v2.6" stroke="#58b848" stroke-width="1"/>
<rect x="466.42400000000004" y="391.05" width="4.752000000000001" height="1.9" fill="#f0f016" fill-opacity="0.45"/>
<text x="468.8" y="393.0" text-anchor="middle" font-size="2.9" font-weight="bold" fill="#f0f016" stroke="#f0f016" stroke-width="0.2" textLength="4.752000000000001" lengthAdjust="spacingAndGlyphs">EAD</text>
<rect x="475.624" y="391.05" width="4.752000000000001" height="1.9" fill="#f0f016" fill-opacity="0.45"/>
<text x="478" y="393.0" text-anchor="middle" font-size="2.9" font-weight="bold" fill="#f0f016" stroke="#f0f016" stroke-width="0.2" textLength="4.752000000000001" lengthAdjust="spacingAndGlyphs">EAD</text>
<rect x="487.40000000000003" y="391.05" width="4.4" height="1.9" fill="#f0f016" fill-opacity="0.45"/>
<text x="489.6" y="393.0" text-anchor="middle" font-size="2.9" font-weight="bold" fill="#f0f016" stroke="#f0f016" stroke-width="0.2" textLength="4.4" lengthAdjust="spacingAndGlyphs">EAD</text>
<path d="M471.9 393.6 v3.6" stroke="#b52ab6" stroke-width="1.1"/>
<path d="M471.0 397.3 L472.79999999999995 397.3 L474.59999999999997 403.1 L469.2 403.1 Z" fill="#f0f016" fill-opacity="0.88"/>
<text x="471.9" y="402.20000000000005" text-anchor="middle" font-size="2.8" font-weight="bold" fill="#77771a" textLength="4" lengthAdjust="spacingAndGlyphs">EAG</text>
<rect x="468.8" y="403.1" width="6.800000000000011" height="2.2" rx="1.1" fill="#b4b8c2"/><rect x="470.6" y="403.40000000000003" width="3.2000000000000113" height="1.6" fill="#f0f016"/>
<path d="M483.4 393.6 v3.6" stroke="#b52ab6" stroke-width="1.1"/>
<path d="M482.5 397.3 L484.29999999999995 397.3 L486.09999999999997 403.1 L480.7 403.1 Z" fill="#f0f016" fill-opacity="0.88"/>
<text x="483.4" y="402.20000000000005" text-anchor="middle" font-size="2.8" font-weight="bold" fill="#77771a" textLength="4" lengthAdjust="spacingAndGlyphs">EAG</text>
<rect x="480" y="403.1" width="7" height="2.2" rx="1.1" fill="#b4b8c2"/><rect x="481.8" y="403.40000000000003" width="3.4" height="1.6" fill="#f0f016"/>
<path d="M495.4 393.6 v3.6" stroke="#b52ab6" stroke-width="1.1"/>
<path d="M494.5 397.3 L496.29999999999995 397.3 L498.09999999999997 403.1 L492.7 403.1 Z" fill="#f0f016" fill-opacity="0.88"/>
<text x="495.4" y="402.20000000000005" text-anchor="middle" font-size="2.8" font-weight="bold" fill="#77771a" textLength="4" lengthAdjust="spacingAndGlyphs">EAG</text>
<rect x="489" y="403.1" width="13" height="2.2" rx="1" fill="#e6e6d0"/><rect x="489.8" y="403.30000000000007" width="11.4" height="1.8" fill="#f0f016"/>
<path d="M367.8 438.8 H380 Q381 438.8 381 439.8 V441" fill="none" stroke="#cc7418" stroke-width="0.9"/>
<rect x="371.22400000000005" y="437.85" width="4.752000000000001" height="1.9" fill="#f0f016" fill-opacity="0.45"/>
<text x="373.6" y="439.8" text-anchor="middle" font-size="2.9" font-weight="bold" fill="#f0f016" stroke="#f0f016" stroke-width="0.2" textLength="4.752000000000001" lengthAdjust="spacingAndGlyphs">EAD</text>
<path d="M381 439.8 v3.6" stroke="#b52ab6" stroke-width="1.1"/>
<path d="M380.1 443.5 L381.9 443.5 L383.7 449.3 L378.3 449.3 Z" fill="#f0f016" fill-opacity="0.88"/>
<text x="381" y="448.40000000000003" text-anchor="middle" font-size="2.8" font-weight="bold" fill="#77771a" textLength="4" lengthAdjust="spacingAndGlyphs">EAG</text>
<rect x="375" y="449.3" width="12.199999999999989" height="2.2" rx="1" fill="#e6e6d0"/><rect x="375.8" y="449.50000000000006" width="10.599999999999989" height="1.8" fill="#f0f016"/>
<rect x="408.712" y="439.05" width="4.5760000000000005" height="1.9" fill="#f0f016" fill-opacity="0.45"/>
<text x="411" y="441.0" text-anchor="middle" font-size="2.9" font-weight="bold" fill="#f0f016" stroke="#f0f016" stroke-width="0.2" textLength="4.5760000000000005" lengthAdjust="spacingAndGlyphs">EAD</text>
<rect x="420.312" y="439.05" width="4.5760000000000005" height="1.9" fill="#f0f016" fill-opacity="0.45"/>
<text x="422.6" y="441.0" text-anchor="middle" font-size="2.9" font-weight="bold" fill="#f0f016" stroke="#f0f016" stroke-width="0.2" textLength="4.5760000000000005" lengthAdjust="spacingAndGlyphs">EAD</text>
<path d="M416.3 439.8 v3.6" stroke="#b52ab6" stroke-width="1.1"/>
<path d="M415.40000000000003 443.5 L417.2 443.5 L419.0 449.3 L413.6 449.3 Z" fill="#f0f016" fill-opacity="0.88"/>
<text x="416.3" y="448.40000000000003" text-anchor="middle" font-size="2.8" font-weight="bold" fill="#77771a" textLength="4" lengthAdjust="spacingAndGlyphs">EAG</text>
<rect x="413.4" y="449.3" width="6.2000000000000455" height="2.2" rx="1.1" fill="#b4b8c2"/><rect x="415.2" y="449.6" width="2.6000000000000454" height="1.6" fill="#f0f016"/>
<path d="M426 439.8 v3.6" stroke="#b52ab6" stroke-width="1.1"/>
<path d="M425.1 443.5 L426.9 443.5 L428.7 449.3 L423.3 449.3 Z" fill="#f0f016" fill-opacity="0.88"/>
<text x="426" y="448.40000000000003" text-anchor="middle" font-size="2.8" font-weight="bold" fill="#77771a" textLength="4" lengthAdjust="spacingAndGlyphs">EAG</text>
<rect x="421.6" y="449.3" width="9.0" height="2.2" rx="1.1" fill="#b4b8c2"/><rect x="423.40000000000003" y="449.6" width="5.4" height="1.6" fill="#f0f016"/>
<path d="M462.2 438.2 H438.5 Q437.5 438.2 437.5 439.2 V440.6 M450.9 438.2 V440.6" fill="none" stroke="#cc7418" stroke-width="0.9"/>
<rect x="439.912" y="437.05" width="4.5760000000000005" height="1.9" fill="#f0f016" fill-opacity="0.45"/>
<text x="442.2" y="439.0" text-anchor="middle" font-size="2.9" font-weight="bold" fill="#f0f016" stroke="#f0f016" stroke-width="0.2" textLength="4.5760000000000005" lengthAdjust="spacingAndGlyphs">EAD</text>
<rect x="453.312" y="437.05" width="4.5760000000000005" height="1.9" fill="#f0f016" fill-opacity="0.45"/>
<text x="455.6" y="439.0" text-anchor="middle" font-size="2.9" font-weight="bold" fill="#f0f016" stroke="#f0f016" stroke-width="0.2" textLength="4.5760000000000005" lengthAdjust="spacingAndGlyphs">EAD</text>
<path d="M460.4 436.4 v3.4 M451.6 439.6 l-1.4 1.6" stroke="#58b848" stroke-width="1"/>
<path d="M437.5 439.6 v3.6" stroke="#b52ab6" stroke-width="1.1"/>
<path d="M436.6 443.3 L438.4 443.3 L440.2 449.1 L434.8 449.1 Z" fill="#f0f016" fill-opacity="0.88"/>
<text x="437.5" y="448.20000000000005" text-anchor="middle" font-size="2.8" font-weight="bold" fill="#77771a" textLength="4" lengthAdjust="spacingAndGlyphs">EAG</text>
<rect x="433.6" y="449.1" width="10.0" height="2.2" rx="1" fill="#e6e6d0"/><rect x="434.40000000000003" y="449.30000000000007" width="8.4" height="1.8" fill="#f0f016"/>
<path d="M450.9 439.6 v3.6" stroke="#b52ab6" stroke-width="1.1"/>
<path d="M450.0 443.3 L451.79999999999995 443.3 L453.59999999999997 449.1 L448.2 449.1 Z" fill="#f0f016" fill-opacity="0.88"/>
<text x="450.9" y="448.20000000000005" text-anchor="middle" font-size="2.8" font-weight="bold" fill="#77771a" textLength="4" lengthAdjust="spacingAndGlyphs">EAG</text>
<rect x="445" y="449.1" width="13.600000000000023" height="2.2" rx="1" fill="#e6e6d0"/><rect x="445.8" y="449.30000000000007" width="12.000000000000023" height="1.8" fill="#f0f016"/>
<path d="M462.2 434.6 H466 V437.4 H482.4 Q483.4 437.4 483.4 438.4 V440.6 M471.6 437.4 V440.6" fill="none" stroke="#cc7418" stroke-width="0.9"/>
<rect x="475.312" y="436.05" width="4.5760000000000005" height="1.9" fill="#f0f016" fill-opacity="0.45"/>
<text x="477.6" y="438.0" text-anchor="middle" font-size="2.9" font-weight="bold" fill="#f0f016" stroke="#f0f016" stroke-width="0.2" textLength="4.5760000000000005" lengthAdjust="spacingAndGlyphs">EAD</text>
<path d="M471.6 439.6 v3.6" stroke="#b52ab6" stroke-width="1.1"/>
<path d="M470.70000000000005 443.3 L472.5 443.3 L474.3 449.1 L468.90000000000003 449.1 Z" fill="#f0f016" fill-opacity="0.88"/>
<text x="471.6" y="448.20000000000005" text-anchor="middle" font-size="2.8" font-weight="bold" fill="#77771a" textLength="4" lengthAdjust="spacingAndGlyphs">EAG</text>
<rect x="466.4" y="449.1" width="11.600000000000023" height="2.2" rx="1" fill="#e6e6d0"/><rect x="467.2" y="449.30000000000007" width="10.000000000000023" height="1.8" fill="#f0f016"/>
<path d="M483.4 439.6 v3.6" stroke="#b52ab6" stroke-width="1.1"/>
<path d="M482.5 443.3 L484.29999999999995 443.3 L486.09999999999997 449.1 L480.7 449.1 Z" fill="#f0f016" fill-opacity="0.88"/>
<text x="483.4" y="448.20000000000005" text-anchor="middle" font-size="2.8" font-weight="bold" fill="#77771a" textLength="4" lengthAdjust="spacingAndGlyphs">EAG</text>
<rect x="480.4" y="449.1" width="6.2000000000000455" height="2.2" rx="1.1" fill="#b4b8c2"/><rect x="482.2" y="449.40000000000003" width="2.6000000000000454" height="1.6" fill="#f0f016"/>
<path d="M464.2 433.4 l4.4 -3.4" stroke="#9a9a9a" stroke-width="0.5"/><path d="M463.6 432.4 v2.4" stroke="#58b848" stroke-width="1.2"/>
<rect x="470.40000000000003" y="428.65000000000003" width="4.4" height="1.9" fill="#f0f016" fill-opacity="0.45"/>
<text x="472.6" y="430.6" text-anchor="middle" font-size="2.9" font-weight="bold" fill="#f0f016" stroke="#f0f016" stroke-width="0.2" textLength="4.4" lengthAdjust="spacingAndGlyphs">E/F</text>
<rect x="370.712" y="469.05" width="4.5760000000000005" height="1.9" fill="#f0f016" fill-opacity="0.45"/>
<text x="373" y="471.0" text-anchor="middle" font-size="2.9" font-weight="bold" fill="#f0f016" stroke="#f0f016" stroke-width="0.2" textLength="4.5760000000000005" lengthAdjust="spacingAndGlyphs">EAD</text>
<rect x="383.712" y="469.05" width="4.5760000000000005" height="1.9" fill="#f0f016" fill-opacity="0.45"/>
<text x="386" y="471.0" text-anchor="middle" font-size="2.9" font-weight="bold" fill="#f0f016" stroke="#f0f016" stroke-width="0.2" textLength="4.5760000000000005" lengthAdjust="spacingAndGlyphs">EAD</text>
<rect x="465.40000000000003" y="468.05" width="4.4" height="1.9" fill="#f0f016" fill-opacity="0.45"/>
<text x="467.6" y="470.0" text-anchor="middle" font-size="2.9" font-weight="bold" fill="#f0f016" stroke="#f0f016" stroke-width="0.2" textLength="4.4" lengthAdjust="spacingAndGlyphs">EAD</text>
<path d="M381.6 467.6 l-1.2 2.4 M463.4 468.4 l1.4 1.6" stroke="#58b848" stroke-width="1"/>
<path d="M378.5 469.6 v3.6" stroke="#b52ab6" stroke-width="1.1"/>
<path d="M377.6 473.3 L379.4 473.3 L381.2 479.1 L375.8 479.1 Z" fill="#f0f016" fill-opacity="0.88"/>
<text x="378.5" y="478.20000000000005" text-anchor="middle" font-size="2.8" font-weight="bold" fill="#77771a" textLength="4" lengthAdjust="spacingAndGlyphs">EAG</text>
<rect x="374.4" y="479.1" width="9.200000000000045" height="2.2" rx="1" fill="#e6e6d0"/><rect x="375.2" y="479.30000000000007" width="7.600000000000046" height="1.8" fill="#f0f016"/>
<path d="M391.2 469.6 v3.6" stroke="#b52ab6" stroke-width="1.1"/>
<path d="M390.3 473.3 L392.09999999999997 473.3 L393.9 479.1 L388.5 479.1 Z" fill="#f0f016" fill-opacity="0.88"/>
<text x="391.2" y="478.20000000000005" text-anchor="middle" font-size="2.8" font-weight="bold" fill="#77771a" textLength="4" lengthAdjust="spacingAndGlyphs">EAG</text>
<rect x="387.4" y="479.1" width="8.200000000000045" height="2.2" rx="1.1" fill="#b4b8c2"/><rect x="389.2" y="479.40000000000003" width="4.600000000000046" height="1.6" fill="#f0f016"/>
<path d="M472.8 469.6 v3.6" stroke="#b52ab6" stroke-width="1.1"/>
<path d="M471.90000000000003 473.3 L473.7 473.3 L475.5 479.1 L470.1 479.1 Z" fill="#f0f016" fill-opacity="0.88"/>
<text x="472.8" y="478.20000000000005" text-anchor="middle" font-size="2.8" font-weight="bold" fill="#77771a" textLength="4" lengthAdjust="spacingAndGlyphs">EAG</text>
<rect x="469.4" y="479.1" width="7.2000000000000455" height="2.2" rx="1.1" fill="#b4b8c2"/><rect x="471.2" y="479.40000000000003" width="3.6000000000000454" height="1.6" fill="#f0f016"/>
<text x="502" y="362.70000000000005" font-size="3.2" font-weight="bold" fill="#f0f016" stroke="#f0f016" stroke-width="0.25" textLength="17" lengthAdjust="spacingAndGlyphs">ROOF FLOOR</text>
<path d="M514 364.8 l1.2 1.6 l1.2 -1.6" fill="none" stroke="#b06a30" stroke-width="0.5"/>
<text x="504" y="407.1" font-size="3.2" font-weight="bold" fill="#f0f016" stroke="#f0f016" stroke-width="0.25" textLength="14" lengthAdjust="spacingAndGlyphs">1ST FLOOR</text>
<path d="M513 409.2 l1.2 1.6 l1.2 -1.6" fill="none" stroke="#b06a30" stroke-width="0.5"/>
<text x="500.6" y="451.1" font-size="3.2" font-weight="bold" fill="#f0f016" stroke="#f0f016" stroke-width="0.25" textLength="19.399999999999977" lengthAdjust="spacingAndGlyphs">GROUND FLOOR</text>
<path d="M515 453.2 l1.2 1.6 l1.2 -1.6" fill="none" stroke="#b06a30" stroke-width="0.5"/>
<text x="504" y="488.1" font-size="3.2" font-weight="bold" fill="#f0f016" stroke="#f0f016" stroke-width="0.25" textLength="13.600000000000023" lengthAdjust="spacingAndGlyphs">BASEMENT</text>
<path d="M512.6 490.2 l1.2 1.6 l1.2 -1.6" fill="none" stroke="#b06a30" stroke-width="0.5"/>
<text x="373.2" y="505" font-size="6.6" fill="#f0f016" stroke="#f0f016" stroke-width="0.22" textLength="74.6" lengthAdjust="spacingAndGlyphs" style="white-space:pre">EXTRACT  AIR RISER DIAGRAM</text>
</svg>
<!--DIAGRAM-END-->
<div class="abs" style="left:1019.4px;top:92.4px;width:4.6px;height:443px;background:linear-gradient(to right,#1a2028 0,#1a2028 0.5px,#c0d2e9 0.9px,#dde7f3 100%);"></div>
<div class="t" style="left:2.2px;top:96px;font-size:6.3px;color:#e8e8e8;letter-spacing:0.106px">[−][Top][2D Wireframe]</div>
<div class="abs" style="left:988px;top:101.2px;width:5px;height:1.2px;background:#f0f0f0;"></div>
<svg class="abs" style="left:996px;top:96px;" width="9" height="9" viewBox="0 0 9 9"><rect x="2.2" y="3.6" width="3.6" height="3" fill="none" stroke="#f2f2f2" stroke-width="0.9"/><path d="M3.6 3 V2.2 H7.2 V5.4 H6.4" fill="none" stroke="#dcdcdc" stroke-width="0.9"/></svg>
<svg class="abs" style="left:1008px;top:97.6px;" width="6" height="6" viewBox="0 0 6 6"><path d="M0.8 0.8 L5.2 5.2 M5.2 0.8 L0.8 5.2" stroke="#f0f0f0" stroke-width="1.1"/></svg>
<svg class="abs" style="left:70px;top:195px;" width="55" height="55" viewBox="70 195 55 55">
<path d="M80.2 211.5 V237.6 H107" fill="none" stroke="#dcdcdc" stroke-width="0.8"/>
<rect x="77.8" y="235.2" width="4.8" height="4.8" fill="none" stroke="#dcdcdc" stroke-width="0.7"/>
</svg>
<div class="t" style="left:80.8px;top:200px;font-size:10.4px;color:#c4c4c4;line-height:10px;height:10px;">Y</div>
<div class="t" style="left:108.8px;top:229px;font-size:10.4px;color:#c4c4c4;line-height:10px;height:10px;">X</div>
<svg class="abs" style="left:935px;top:110px;" width="82" height="100" viewBox="935 110 82 100">
<circle cx="975.9" cy="149.3" r="27.9" fill="none" stroke="#464b52" stroke-width="7.8"/>
<rect x="962.1" y="135.3" width="27.4" height="27.2" fill="#b1b3b4"/>
<rect x="967.6" y="140.8" width="16.4" height="16.2" fill="#a3adb6"/>
<rect x="963.2" y="195.8" width="25.4" height="8.8" rx="1.6" fill="#8b9096"/>
<rect x="977.6" y="196.8" width="10" height="6.8" rx="1" fill="#92979d"/>
<g font-family="Liberation Sans, sans-serif" font-weight="bold" fill="#cfcfcf" text-anchor="middle" font-size="10.4">
<text x="975.8" y="122.8">N</text><text x="1005.6" y="153.4">E</text><text x="975.8" y="183.4">S</text><text x="946" y="153.4">W</text></g>
<text x="975.9" y="151.7" font-family="Liberation Sans, sans-serif" font-size="6.6" fill="#32373d" stroke="#32373d" stroke-width="0.15" text-anchor="middle" textLength="11.4" lengthAdjust="spacingAndGlyphs">TOP</text>
<text x="966" y="202.4" font-family="Liberation Sans, sans-serif" font-size="5.6" fill="#3a3f45" textLength="11.6" lengthAdjust="spacingAndGlyphs">WCS</text>
</svg>
<svg class="abs" style="left:1000px;top:217px;" width="20" height="116" viewBox="1000 217 20 116">
<rect x="1001" y="218.3" width="17" height="113" rx="1.6" fill="#54595f"/>
<g fill="none" stroke="#696e74" stroke-width="0.9">
<circle cx="1009.3" cy="234.6" r="5.4"/><circle cx="1009.3" cy="234.6" r="2.9"/>
<circle cx="1014.6" cy="221.6" r="0.9" stroke-width="0.6"/><circle cx="1014.6" cy="328" r="0.9" stroke-width="0.6"/>
<path d="M1005.6 257 q1 4.4 3 5.4 h2.6 q1.8 -1.6 2 -6.4 M1006.8 258 v-4.6 M1008.6 257 v-6 M1010.4 257 v-6 M1012 257.4 v-4.6"/>
<path d="M1004.6 266.6 l8.6 8.6 M1013 266.6 l-8.4 8.4"/><circle cx="1012.2" cy="273.6" r="1.8"/>
<path d="M1009.4 286 v12.6 M1003.6 292.4 h11.4 l-2 -2 M1015 292.4 l-2 2 M1009.4 286 l-1.6 2.2 M1009.4 286 l1.6 2.2"/>
<rect x="1004.4" y="312" width="9.6" height="8.6"/><path d="M1004.4 309.6 h2.4 M1008 309.6 h2.4 M1011.6 309.6 h2.4" stroke-width="1.6"/>
</g>
<path d="M1007.8 314 l3.4 2.2 l-3.4 2.2 Z" fill="#6f747a"/>
<path d="M1008.2 244.4 h2.4 l-1.2 1.2 Z M1008.2 282 h2.4 l-1.2 1.2 Z M1008.2 303.4 h2.4 l-1.2 1.2 Z" fill="#6f747a"/>
</svg>
<div class="abs" style="left:305.6px;top:521.4px;width:28.2px;height:13.6px;background:#3b3b3b;border:0.5px solid #555;box-sizing:border-box;"></div>
<div class="abs" style="left:333.6px;top:521.4px;width:385.6px;height:13.6px;background:#bdbdbd;"></div>
<div class="abs" style="left:307.4px;top:523.4px;width:1.6px;height:10px;background:repeating-linear-gradient(#6a6a6a 0 1px,#3c3c3c 1px 2px);"></div>
<svg class="abs" style="left:311px;top:522px;" width="24" height="13" viewBox="311 522 24 13"><path d="M313.6 526.4 l3.8 3.8 M317.4 526.4 l-3.8 3.8" stroke="#e4e4e4" stroke-width="1"/><path d="M324.6 525.6 l4.6 5" stroke="#dcdcdc" stroke-width="1.5" stroke-linecap="round"/><path d="M322.8 524.4 a2 2 0 1 0 3 2.4" fill="none" stroke="#dcdcdc" stroke-width="1.1"/></svg>
<div class="abs" style="left:337px;top:524.4px;width:7.6px;height:8px;background:#a3adba;border:0.5px solid #7c8694;box-sizing:border-box;"></div>
<svg class="abs" style="left:337px;top:524.4px;" width="8" height="8" viewBox="0 0 8 8"><path d="M1.6 2.4 l2 1.6 l-2 1.6 M4.4 5.8 h2.2" stroke="#2f3742" stroke-width="0.8" fill="none"/></svg>
<div class="dd" style="left:346.2px;top:527.8px;background:#555;width:2.8px;height:1.7px;"></div>
<div class="t" style="left:353px;top:524.5px;font-family:'Liberation Mono',monospace;font-style:italic;font-size:6.3px;color:#7b7b7b;letter-spacing:-0.065px">Type a command</div>
<div class="abs" style="left:714.6px;top:527.6px;width:0;height:0;border-left:1.5px solid transparent;border-right:1.5px solid transparent;border-bottom:1.7px solid #333;"></div>

<!-- ================= TITLE BAR ================= -->
<div id="title" class="abs"></div>
<div class="t" style="left:359px;top:3.1px;font-size:6.5px;color:#170807;-webkit-text-stroke:0.25px #170807;letter-spacing:-0.187px">Autodesk AutoCAD 2019</div>
<div class="t" style="left:434.7px;top:3.1px;font-size:6.5px;color:#170807;-webkit-text-stroke:0.25px #170807;word-spacing:1.2px;letter-spacing:-0.451px">DIAGRAM-FRESH  AIR RISER.dwg</div>
<!-- search -->
<div class="abs" style="left:699px;top:0;width:7px;height:12.2px;background:#a6a6a6;"></div>
<div class="abs" style="left:701.3px;top:4.6px;width:0;height:0;border-top:1.8px solid transparent;border-bottom:1.8px solid transparent;border-left:2px solid #f0f0f0;"></div>
<div class="abs" style="left:706px;top:0;width:97px;height:12.3px;background:#757575;border-top:1px solid #5f5f5f;box-sizing:border-box;"></div>
<div class="t" style="left:708.5px;top:2.6px;font-size:6.4px;font-style:italic;color:#b9b9b9;letter-spacing:-0.372px">Type a keyword or phrase</div>
<div class="abs" style="left:803px;top:0;width:134.5px;height:12.3px;background:#a9a9a9;"></div>
<div class="t" style="left:829px;top:2.6px;font-size:6.6px;color:#f4f4f4;letter-spacing:-0.219px">Sign In</div>
<!-- binoculars -->
<svg class="abs" style="left:804px;top:1px;" width="11" height="11" viewBox="0 0 11 11"><g fill="#2b2b2b"><rect x="1.6" y="2.2" width="2.6" height="6.8" rx="0.8"/><rect x="6" y="2.2" width="2.6" height="6.8" rx="0.8"/><rect x="4" y="3.4" width="2.4" height="1.6"/></g><rect x="2.3" y="6" width="1.2" height="2.3" fill="#cfcfcf"/><rect x="6.7" y="6" width="1.2" height="2.3" fill="#cfcfcf"/></svg>
<!-- user -->
<svg class="abs" style="left:815.5px;top:1px;" width="11" height="11" viewBox="0 0 11 11"><circle cx="5.5" cy="3.6" r="2.3" fill="#f2f2f2" stroke="#555" stroke-width="0.5"/><path d="M1.2 9.6 Q1.4 6.6 5.5 6.6 Q9.6 6.6 9.8 9.6 Z" fill="#f2f2f2" stroke="#555" stroke-width="0.5"/></svg>
<div class="dd" style="left:873.5px;top:5.6px;background:#ececec;"></div>
<!-- cart -->
<svg class="abs" style="left:881px;top:1px;" width="11" height="11" viewBox="0 0 11 11"><path d="M0.8 1.8 H2.4 L3.6 7 H8.8 L9.6 3.2 H3" fill="none" stroke="#4a5560" stroke-width="0.9"/><rect x="3.3" y="3.4" width="6" height="3.2" fill="#e0e0e0" stroke="#4a5560" stroke-width="0.4"/><circle cx="4.3" cy="8.8" r="0.9" fill="#2b2b2b"/><circle cx="8.2" cy="8.8" r="0.9" fill="#2b2b2b"/></svg>
<!-- a360 -->
<svg class="abs" style="left:894px;top:1px;" width="11" height="11" viewBox="0 0 11 11"><g fill="#d8dde4" stroke="#3f5678" stroke-width="0.8"><circle cx="5.5" cy="3.2" r="1.9"/><circle cx="3.1" cy="7.3" r="1.9"/><circle cx="7.9" cy="7.3" r="1.9"/></g></svg>
<div class="dd" style="left:906.5px;top:5.6px;background:#ececec;"></div>
<!-- help -->
<svg class="abs" style="left:918.5px;top:1px;" width="11" height="11" viewBox="0 0 11 11"><circle cx="5.5" cy="5.5" r="3.9" fill="#f4f4f4" stroke="#2f4e7c" stroke-width="0.8"/><text x="5.5" y="7.7" font-size="6" font-weight="bold" text-anchor="middle" fill="#2f4e9c" font-family="Liberation Sans, sans-serif">?</text></svg>
<div class="dd" style="left:932px;top:5.6px;background:#ececec;"></div>
<!-- window controls -->
<div class="abs" style="left:960.2px;top:5.8px;width:5px;height:0.9px;background:#c9b8b4;"></div>
<svg class="abs" style="left:982px;top:2px;" width="9" height="9" viewBox="0 0 9 9"><rect x="1.8" y="2.9" width="3.8" height="3.8" rx="0.7" fill="none" stroke="#e2d4d0" stroke-width="0.8"/><path d="M3.2 2.2 V2 Q3.2 1.6 3.6 1.6 H6.4 Q6.9 1.6 6.9 2.1 V4.9 Q6.9 5.3 6.5 5.3 H6.3" fill="none" stroke="#bfa9a4" stroke-width="0.8"/></svg>

<svg class="abs" style="left:1006px;top:2px;" width="10" height="10" viewBox="0 0 10 10"><path d="M2.4 1.8 L7.8 7.2 M7.8 1.8 L2.4 7.2" stroke="#e6d9d6" stroke-width="0.8" fill="none"/></svg>
<div id="tabrow" class="abs"></div>
<div class="abs" style="left:24.6px;top:14.2px;width:27.4px;height:10px;background:#3a3a3a;"></div><div class="abs" style="left:25.2px;top:14.8px;width:26.2px;height:9.6px;background:linear-gradient(#686868,#5e5e5e);"></div>
<div class="t" style="left:29.8px;top:14.6px;font-size:6.5px;color:#ffffff;letter-spacing:-0.136px">Home</div>
<div class="t" style="left:57.8px;top:14.6px;font-size:6.5px;color:#d9d9d9;letter-spacing:-0.211px">Insert</div>
<div class="t" style="left:84.2px;top:14.6px;font-size:6.5px;color:#d9d9d9;letter-spacing:-0.066px">Annotate</div>
<div class="t" style="left:120.6px;top:14.6px;font-size:6.5px;color:#d9d9d9;letter-spacing:-0.144px">Parametric</div>
<div class="t" style="left:161.6px;top:14.6px;font-size:6.5px;color:#d9d9d9;letter-spacing:-0.246px">View</div>
<div class="t" style="left:185.8px;top:14.6px;font-size:6.5px;color:#d9d9d9;letter-spacing:-0.083px">Manage</div>
<div class="t" style="left:219.2px;top:14.6px;font-size:6.5px;color:#d9d9d9;letter-spacing:0.164px">Output</div>
<div class="t" style="left:250.6px;top:14.6px;font-size:6.5px;color:#d9d9d9;letter-spacing:-0.007px">Add-ins</div>
<div class="t" style="left:283.6px;top:14.6px;font-size:6.5px;color:#d9d9d9;letter-spacing:-0.114px">Collaborate</div>
<div class="t" style="left:326.6px;top:14.6px;font-size:6.5px;color:#d9d9d9;letter-spacing:-0.175px">Featured Apps</div>
<div class="t" style="left:377.8px;top:14.6px;font-size:6.5px;color:#d9d9d9;letter-spacing:-0.273px">Express Tools</div>
<div class="abs" style="left:432px;top:16.6px;width:7px;height:4px;background:#efefef;border-radius:1px;"></div><div class="abs" style="left:434px;top:17.8px;width:3px;height:1.6px;background:#404040;"></div>
<div class="dd" style="left:441.6px;top:18px;"></div>
<div id="ribbon" class="abs"></div>
<div class="abs" style="left:0;top:56.6px;width:1024px;height:19.6px;background:#3a3a3a;"></div>
<!--RIBBON-START-->
<div class="panel" style="left:2px;width:117.5px;"></div><div class="ptitle" style="left:2px;width:117.5px;"></div>
<div class="panel" style="left:120.5px;width:132.5px;"></div><div class="ptitle" style="left:120.5px;width:132.5px;"></div>
<div class="panel" style="left:254px;width:100.5px;"></div><div class="ptitle" style="left:254px;width:100.5px;"></div>
<div class="panel" style="left:355.5px;width:144.5px;"></div><div class="ptitle" style="left:355.5px;width:144.5px;"></div>
<div class="panel" style="left:501px;width:85px;"></div><div class="ptitle" style="left:501px;width:85px;"></div>
<div class="panel" style="left:587px;width:140.5px;"></div><div class="ptitle" style="left:587px;width:140.5px;"></div>
<div class="panel" style="left:728.5px;width:35.5px;"></div><div class="ptitle" style="left:728.5px;width:35.5px;"></div>
<div class="panel" style="left:765px;width:50.5px;"></div><div class="ptitle" style="left:765px;width:50.5px;"></div>
<div class="panel" style="left:816.5px;width:41.5px;"></div><div class="ptitle" style="left:816.5px;width:41.5px;"></div>
<div class="panel" style="left:859px;width:32.5px;"></div><div class="ptitle" style="left:859px;width:32.5px;"></div>
<div class="pt" style="left:49.8px;letter-spacing:-0.230px">Draw</div><div class="dd" style="left:67.80000000000001px;top:70.2px;"></div>
<div class="pt" style="left:173.7px;letter-spacing:0.112px">Modify</div><div class="dd" style="left:197.6px;top:70.2px;"></div>
<div class="pt" style="left:284.6px;letter-spacing:0.044px">Annotation</div><div class="dd" style="left:320.0px;top:70.2px;"></div>
<div class="pt" style="left:415.1px;letter-spacing:-0.365px">Layers</div><div class="dd" style="left:436.4px;top:70.2px;"></div>
<div class="pt" style="left:532.1px;letter-spacing:-0.128px">Block</div><div class="dd" style="left:551.4px;top:70.2px;"></div>
<div class="pt" style="left:636px;letter-spacing:-0.164px">Properties</div><div class="dd" style="left:668.1px;top:70.2px;"></div>
<div class="pt" style="left:732.3px;letter-spacing:-0.328px">Groups</div><div class="dd" style="left:756.1px;top:70.2px;"></div>
<div class="pt" style="left:776px;letter-spacing:-0.068px">Utilities</div><div class="dd" style="left:800.3px;top:70.2px;"></div>
<div class="pt" style="left:824.1px;letter-spacing:-0.040px">Clipboard</div>
<div class="pt" style="left:861.8px;letter-spacing:-0.312px">View</div><div class="dd" style="left:878.6px;top:70.2px;"></div>
<div class="t" style="left:6.7px;top:47.2px;letter-spacing:-0.273px;">Line</div>
<div class="t" style="left:24.2px;top:47.2px;letter-spacing:-0.111px;">Polyline</div>
<div class="t" style="left:54.2px;top:47.2px;letter-spacing:-0.141px;">Circle</div>
<div class="t" style="left:81.7px;top:47.2px;letter-spacing:-0.198px;">Arc</div>
<div class="dd" style="left:59.9px;top:56.1px;"></div>
<div class="dd" style="left:84.60000000000001px;top:56.1px;"></div>
<div class="dd" style="left:111.9px;top:31.6px;"></div>
<div class="dd" style="left:111.9px;top:44.6px;"></div>
<div class="dd" style="left:111.9px;top:57.6px;"></div>
<div class="abs" style="left:122.5px;top:27px;width:31.5px;height:11.5px;background:linear-gradient(#6c6c6c,#606060);border:0.5px solid #3e3e3e;box-sizing:border-box;"></div>
<div class="t" style="left:135.7px;top:29.1px;letter-spacing:0.090px;">Move</div>
<div class="t" style="left:135.7px;top:42.1px;letter-spacing:0.020px;">Copy</div>
<div class="t" style="left:135.7px;top:55.1px;letter-spacing:-0.179px;">Stretch</div>
<div class="t" style="left:173.7px;top:29.1px;letter-spacing:-0.141px;">Rotate</div>
<div class="t" style="left:173.7px;top:42.1px;letter-spacing:0.219px;">Mirror</div>
<div class="t" style="left:173.7px;top:55.1px;letter-spacing:-0.400px;">Scale</div>
<div class="t" style="left:210.7px;top:29.1px;letter-spacing:-0.137px;">Trim</div>
<div class="t" style="left:210.7px;top:42.1px;letter-spacing:-0.083px;">Fillet</div>
<div class="t" style="left:210.7px;top:55.1px;letter-spacing:-0.256px;">Array</div>
<div class="dd" style="left:228.70000000000002px;top:31.6px;"></div>
<div class="dd" style="left:229.70000000000002px;top:44.6px;"></div>
<div class="dd" style="left:229.70000000000002px;top:57.6px;"></div>
<div class="t" style="left:259.3px;top:25.35px;font-size:21.8px;line-height:22px;height:22px;color:#ececec;">A</div>
<div class="t" style="left:261.7px;top:47.2px;letter-spacing:-0.434px;">Text</div>
<div class="dd" style="left:264.9px;top:56.1px;"></div>
<div class="t" style="left:280.2px;top:47.2px;letter-spacing:-0.078px;">Dimension</div>
<div class="t" style="left:325.7px;top:29.1px;letter-spacing:-0.128px;">Linear</div>
<div class="t" style="left:325.7px;top:42.1px;letter-spacing:-0.318px;">Leader</div>
<div class="t" style="left:325.7px;top:55.1px;letter-spacing:-0.256px;">Table</div>
<div class="dd" style="left:346.4px;top:31.6px;"></div>
<div class="dd" style="left:348.0px;top:44.6px;"></div>
<div class="t" style="left:365.2px;top:47.2px;letter-spacing:-0.500px;">Layer</div>
<div class="t" style="left:358.2px;top:55.2px;letter-spacing:-0.164px;">Properties</div>
<div class="abs" style="left:388px;top:27px;width:110.5px;height:11.5px;background:linear-gradient(#404040,#474747 30%,#4f4f4f);border:0.6px solid #363636;border-radius:1px;box-sizing:border-box;"></div>
<div class="abs" style="left:421.5px;top:29.5px;width:7.5px;height:7px;background:#fdfdfd;border:0.6px solid #222;box-sizing:border-box;"></div>
<div class="t" style="left:431.8px;top:29.1px;">0</div>
<div class="dd" style="left:493.9px;top:31.4px;"></div>
<div class="t" style="left:452.7px;top:42.1px;letter-spacing:-0.060px;">Make Current</div>
<div class="t" style="left:452.7px;top:55.1px;letter-spacing:-0.107px;">Match Layer</div>
<div class="t" style="left:504.2px;top:47.2px;letter-spacing:-0.081px;">Insert</div>
<div class="dd" style="left:510.4px;top:56.1px;"></div>
<div class="t" style="left:535.7px;top:29.1px;letter-spacing:-0.198px;">Create</div>
<div class="t" style="left:535.7px;top:42.1px;letter-spacing:-0.254px;">Edit</div>
<div class="t" style="left:535.7px;top:55.1px;letter-spacing:0.037px;">Edit Attributes</div>
<div class="dd" style="left:579.4px;top:57.6px;"></div>
<div class="t" style="left:594.2px;top:47.2px;letter-spacing:0.219px;">Match</div>
<div class="t" style="left:589.4px;top:55.2px;letter-spacing:-0.164px;">Properties</div>
<div class="abs" style="left:630px;top:26.5px;width:96px;height:11.5px;background:linear-gradient(#404040,#474747 30%,#4f4f4f);border:0.6px solid #363636;border-radius:1px;box-sizing:border-box;"></div>
<div class="dd" style="left:721.4px;top:31.4px;"></div>
<div class="abs" style="left:630px;top:39.5px;width:96px;height:11.5px;background:linear-gradient(#404040,#474747 30%,#4f4f4f);border:0.6px solid #363636;border-radius:1px;box-sizing:border-box;"></div>
<div class="dd" style="left:721.4px;top:44.4px;"></div>
<div class="abs" style="left:630px;top:52px;width:96px;height:11.5px;background:linear-gradient(#404040,#474747 30%,#4f4f4f);border:0.6px solid #363636;border-radius:1px;box-sizing:border-box;"></div>
<div class="dd" style="left:721.4px;top:56.9px;"></div>
<div class="abs" style="left:637px;top:28.5px;width:8.5px;height:8px;background:#fdfdfd;"></div>
<div class="t" style="left:651.2px;top:28.9px;letter-spacing:-0.279px;">ByLayer</div>
<div class="abs" style="left:632px;top:44.7px;width:34px;height:0.7px;background:#c8c8c8;"></div>
<div class="t" style="left:667.7px;top:41.4px;letter-spacing:-0.279px;">ByLayer</div>
<div class="abs" style="left:632px;top:57.4px;width:34px;height:0.7px;background:#a8a8a8;"></div>
<div class="t" style="left:667.7px;top:54.1px;letter-spacing:-0.279px;">ByLayer</div>
<div class="t" style="left:731.2px;top:47.2px;letter-spacing:-0.253px;">Group</div>
<div class="abs" style="left:751px;top:53px;width:12px;height:11px;background:#3c6a9c;"></div>
<div class="t" style="left:771.7px;top:47.2px;letter-spacing:-0.125px;">Measure</div>
<div class="dd" style="left:782.0px;top:56.1px;"></div>
<div class="t" style="left:823.7px;top:47.2px;letter-spacing:-0.369px;">Paste</div>
<div class="dd" style="left:829.4px;top:56.1px;"></div>
<div class="t" style="left:869.2px;top:47.2px;letter-spacing:-0.395px;">Base</div>
<div class="dd" style="left:874.4px;top:56.1px;"></div>
<div class="t" style="left:885.4px;top:66.8px;font-size:5.5px;color:#ddd;">»</div>
<div class="t" style="left:721.8px;top:67.2px;font-size:5px;color:#ccc;">↘</div>
<!--RIBBON-END-->
<!--ICONS-START-->
<svg class="abs" style="left:0;top:24px;" width="1024" height="52" viewBox="0 24 1024 52">
<path d="M4.6 44 L20 28.2" stroke="#d6d6d6" stroke-width="0.9"/>
<rect x="3.6999999999999997" y="43.1" width="1.8" height="1.8" fill="#4aa2ee"/>
<rect x="19.1" y="27.3" width="1.8" height="1.8" fill="#4aa2ee"/>
<path d="M27.4 40.4 H38 A4.6 4.2 0 0 0 38 32" fill="none" stroke="#d6d6d6" stroke-width="0.9"/>
<rect x="26.5" y="39.5" width="1.8" height="1.8" fill="#4aa2ee"/>
<rect x="37.1" y="39.5" width="1.8" height="1.8" fill="#4aa2ee"/>
<rect x="37.1" y="31.1" width="1.8" height="1.8" fill="#4aa2ee"/>
<circle cx="61.5" cy="35.8" r="8.1" fill="none" stroke="#d6d6d6" stroke-width="0.9"/><path d="M61.5 35.8 L66.4 30.8" stroke="#4aa2ee" stroke-width="0.9"/>
<rect x="60.7" y="35.0" width="1.6" height="1.6" fill="#4aa2ee"/>
<rect x="65.60000000000001" y="30.0" width="1.6" height="1.6" fill="#4aa2ee"/>
<path d="M79.8 43.6 Q80.6 30.6 94 29" fill="none" stroke="#d6d6d6" stroke-width="0.9"/>
<rect x="78.89999999999999" y="42.7" width="1.8" height="1.8" fill="#4aa2ee"/>
<rect x="83.1" y="32.5" width="1.8" height="1.8" fill="#4aa2ee"/>
<rect x="93.1" y="28.1" width="1.8" height="1.8" fill="#4aa2ee"/>
<rect x="100.2" y="29.6" width="8" height="5.8" fill="none" stroke="#d6d6d6" stroke-width="1.1"/>
<rect x="99.4" y="28.8" width="1.6" height="1.6" fill="#4aa2ee"/>
<rect x="107.4" y="34.800000000000004" width="1.6" height="1.6" fill="#4aa2ee"/>
<ellipse cx="103.6" cy="45.5" rx="4.3" ry="2.8" fill="none" stroke="#d6d6d6" stroke-width="0.8" stroke-dasharray="2.4 0.6"/>
<rect x="103.0" y="44.9" width="1.2" height="1.2" fill="#4aa2ee"/>
<rect x="107.2" y="44.9" width="1.2" height="1.2" fill="#4aa2ee"/>
<rect x="103.0" y="42.0" width="1.2" height="1.2" fill="#4aa2ee"/>
<rect x="100.4" y="54.6" width="7.6" height="7.4" fill="#767676"/><rect x="102" y="56" width="4.6" height="4.6" fill="#3f7fc0"/><circle cx="104.3" cy="58.3" r="1.3" fill="none" stroke="#8cc4f4" stroke-width="0.6"/>
<rect x="99.60000000000001" y="53.800000000000004" width="1.6" height="1.6" fill="#bdbdbd"/>
<rect x="107.2" y="53.800000000000004" width="1.6" height="1.6" fill="#bdbdbd"/>
<rect x="99.60000000000001" y="61.2" width="1.6" height="1.6" fill="#bdbdbd"/>
<rect x="107.2" y="61.2" width="1.6" height="1.6" fill="#bdbdbd"/>
<path d="M125 32.4 h6.6 M128.3 29.1 v6.6" stroke="#f2f2f2" stroke-width="0.8"/><path d="M128.3 28.3 l1.3 1.6 h-2.6 Z M128.3 36.5 l1.3 -1.6 h-2.6 Z M124.2 32.4 l1.6 -1.3 v2.6 Z M132.4 32.4 l-1.6 -1.3 v2.6 Z" fill="#f2f2f2"/>
<circle cx="125.6" cy="42.6" r="1.3" fill="none" stroke="#d6d6d6" stroke-width="0.7"/><circle cx="128.4" cy="42.6" r="1.3" fill="none" stroke="#d6d6d6" stroke-width="0.7"/><path d="M130 42.4 l1.8 1.8 v-1.6 M131.8 44.2 h-1.6" stroke="#d6d6d6" stroke-width="0.6" fill="none"/>
<circle cx="127" cy="47.8" r="1.6" fill="none" stroke="#4aa2ee" stroke-width="0.8"/><circle cx="130.4" cy="47.8" r="1.6" fill="none" stroke="#4aa2ee" stroke-width="0.8"/>
<rect x="124.4" y="54.2" width="3.4" height="8.4" fill="none" stroke="#d6d6d6" stroke-width="0.8"/><path d="M128 54.4 h1.6 l3 8.2 h-4.6" fill="none" stroke="#4aa2ee" stroke-width="0.7"/><path d="M127.2 60 h2.6" stroke="#d6d6d6" stroke-width="1"/>
<path d="M168.4 29.5 A3.9 3.9 0 1 0 170.9 32.6" fill="none" stroke="#d6d6d6" stroke-width="0.9"/><path d="M167.6 28 l2.6 1.4 l-2.4 1.6 Z" fill="#d6d6d6"/>
<path d="M166.4 42.6 v6.8 h-3.6 Z" fill="none" stroke="#d6d6d6" stroke-width="0.8"/><path d="M167.8 42.6 v6.8 h3.6 Z" fill="none" stroke="#4aa2ee" stroke-width="0.8"/><path d="M167.1 41.8 v8.4" stroke="#9cc8f0" stroke-width="0.4" stroke-dasharray="1 0.6"/>
<path d="M162.6 57 V54.6 H171.4 V62.8 H169.4" fill="none" stroke="#4aa2ee" stroke-width="0.7" stroke-dasharray="3.2 0.8"/><rect x="163.4" y="58" width="4.8" height="4.8" fill="none" stroke="#d6d6d6" stroke-width="0.8"/>
<path d="M199.4 29 h3.6 M205.2 29 h3.2" stroke="#4aa2ee" stroke-width="0.6" stroke-dasharray="0.8 0.5"/><path d="M202.4 28.6 l3.6 6.4 M206.4 28.8 l-2.4 5.4" stroke="#efefef" stroke-width="1"/><circle cx="204" cy="35.4" r="1.1" fill="none" stroke="#efefef" stroke-width="0.7"/><circle cx="206.4" cy="34.2" r="1.1" fill="none" stroke="#efefef" stroke-width="0.7"/>
<path d="M199.6 49.6 V46.4" stroke="#d6d6d6" stroke-width="0.9"/><path d="M199.6 46.4 Q199.8 41.6 204.4 41.3" fill="none" stroke="#4aa2ee" stroke-width="0.9"/><path d="M204.4 41.3 H208.2" stroke="#d6d6d6" stroke-width="0.9"/>
<rect x="200.2" y="54.8" width="3" height="2.8" fill="none" stroke="#d6d6d6" stroke-width="0.7"/><rect x="204.8" y="54.8" width="3" height="2.8" fill="none" stroke="#4aa2ee" stroke-width="0.7"/><rect x="200.2" y="59.2" width="3" height="2.8" fill="none" stroke="#4aa2ee" stroke-width="0.7"/><rect x="204.8" y="59.2" width="3" height="2.8" fill="none" stroke="#4aa2ee" stroke-width="0.7"/>
<path d="M243.2 33.4 L247.4 28.4 L248.8 29.8 L244.8 34.8 Z" fill="#f0c058"/><path d="M242.4 34.4 L243.2 33.4 L244.8 34.8 L244 35.8 Z" fill="#f4f4f4"/><path d="M241.6 36 l0.8 -1.6 l1.6 1.4 Z" fill="#d04848"/><path d="M243.6 36.6 h4.6" stroke="#4aa2ee" stroke-width="0.7"/><path d="M240 36.6 h1.4" stroke="#d6d6d6" stroke-width="0.6"/>
<rect x="240.6" y="44.6" width="5" height="4.6" fill="#4d4d4d" stroke="#d6d6d6" stroke-width="0.8"/><path d="M240.6 44.6 l1.8 -2 h5 l-1.8 2 M247.4 42.6 v4.6 l-1.8 2" fill="none" stroke="#4aa2ee" stroke-width="0.8"/>
<path d="M248.4 55.4 H242.4 A3 3 0 0 0 242.4 61.6 H248.4" fill="none" stroke="#4aa2ee" stroke-width="0.8"/><path d="M248.4 57.2 H243 A1.3 1.3 0 0 0 243 59.8 H248.4" fill="none" stroke="#d6d6d6" stroke-width="0.8"/>
<path d="M286.2 27.8 V44.8 M302.9 27.8 V44.8" stroke="#d6d6d6" stroke-width="0.8"/><path d="M287.4 31.4 H301.8" stroke="#d6d6d6" stroke-width="0.6"/><path d="M286.8 31.4 l1.8 -0.9 v1.8 Z M302.4 31.4 l-1.8 -0.9 v1.8 Z" fill="#d6d6d6"/>
<path d="M294.5 36.4 V39 M290.6 38 L292.4 40 M298.4 38 L296.6 40 M288.6 42.6 H291.2 M297.8 42.6 H300.4" stroke="#f0c040" stroke-width="1" stroke-linecap="round"/>
<path d="M314.6 28.8 V36 M322.6 28.8 V36" stroke="#d6d6d6" stroke-width="0.8"/><path d="M315 31.4 H322.2" stroke="#4aa2ee" stroke-width="0.8"/>
<circle cx="321.2" cy="43.4" r="1.5" fill="none" stroke="#d6d6d6" stroke-width="0.7"/><path d="M319.8 43.8 Q316.4 44 315.2 48" fill="none" stroke="#d6d6d6" stroke-width="0.7"/><path d="M314.4 49.2 l0.2 -2.2 l1.6 1 Z" fill="#d6d6d6"/>
<rect x="314.6" y="54.6" width="8.2" height="7.4" fill="none" stroke="#d6d6d6" stroke-width="0.8"/><path d="M314.6 56.8 h8.2 M314.6 59.4 h8.2 M317.4 56.8 v5.2 M320 56.8 v5.2" stroke="#d6d6d6" stroke-width="0.6"/>
<path d="M363 33.6 L369 27.8 H377.6 L371.6 33.6 Z" fill="#d9d9d9"/><path d="M363 36.6 L364.4 35.2 H373 L371.6 36.6 Z M363 39.8 L364.4 38.4 H373 L371.6 39.8 Z" fill="#c8c8c8"/><path d="M363.4 34.6 h8.6 l3.4 -3.4 M363.4 37.8 h8.6" stroke="#efefef" stroke-width="0.7" fill="none"/>
<rect x="373" y="35" width="7.2" height="10" fill="#f2f2f2"/><rect x="374" y="36.4" width="5.2" height="3.2" fill="#4aa2ee"/><path d="M375.4 41.2 v2.6 M377.6 41.2 v2.6 M374.8 42.4 h3.6" stroke="#555" stroke-width="0.6"/>
<circle cx="394.5" cy="31.4" r="2.8" fill="#f2c450"/><rect x="393.5" y="34" width="2" height="2.2" fill="#ececec"/>
<circle cx="404" cy="32" r="2.3" fill="#f2c450"/><path d="M404 28.2 v1 M404 34.8 v1 M400.2 32 h1 M406.8 32 h1 M401.4 29.4 l0.7 0.7 M405.9 33.9 l0.7 0.7 M406.6 29.4 l-0.7 0.7 M402.1 33.9 l-0.7 0.7" stroke="#f2c450" stroke-width="0.7"/>
<rect x="411" y="31.8" width="6" height="4.8" fill="#f2c450"/><path d="M414.4 31.8 v-1.4 a1.5 1.5 0 0 1 3 0" fill="none" stroke="#f2c450" stroke-width="0.8"/><rect x="413.6" y="33.4" width="0.9" height="1.6" fill="#8a6a20"/>
<path d="M390.4 44.4 l2.4 -2.2 h5 l-2.4 2.2 Z" fill="#dcdcdc"/>
<circle cx="397.2" cy="46" r="1.9" fill="#4aa2ee"/><rect x="396.6" y="47.8" width="1.2" height="1.4" fill="#e4e4e4"/>
<path d="M403.4 44.0 l2.4 -2.2 h5 l-2.4 2.2 Z" fill="#dcdcdc"/>
<path d="M403.4 44.6 h5 v3 h-5 Z" fill="#bdbdbd"/><path d="M403.4 46.2 h5 v1.6 h-5 Z" fill="#4aa2ee"/><path d="M408.4 44.6 l2.4 -2.2 v3 l-2.4 2.4 Z" fill="#8a8a8a"/>
<path d="M408.6 49.6 l2.8 -3" stroke="#efefef" stroke-width="0.9"/>
<path d="M416.4 44.4 l2.4 -2.2 h5 l-2.4 2.2 Z" fill="#dcdcdc"/>
<circle cx="423" cy="46.8" r="1.9" fill="#4aa2ee"/><path d="M421.8 46.8 h2.4 M423 45.6 v2.4" stroke="#2a6ab0" stroke-width="0.5"/>
<path d="M429.0 44.4 l2.4 -2.2 h5 l-2.4 2.2 Z" fill="#dcdcdc"/>
<rect x="433.4" y="46.2" width="3.6" height="3" fill="#4aa2ee"/><path d="M434.2 46.2 v-0.8 a1 1 0 0 1 2 0 v0.8" fill="none" stroke="#4aa2ee" stroke-width="0.6"/>
<path d="M390.4 57.0 l2.4 -2.2 h5 l-2.4 2.2 Z" fill="#dcdcdc"/>
<path d="M390.4 57.6 h5 v3 h-5 Z" fill="#bdbdbd"/><path d="M390.4 59.2 h5 v1.6 h-5 Z" fill="#9a9a9a"/><path d="M395.4 57.6 l2.4 -2.2 v3 l-2.4 2.4 Z" fill="#8a8a8a"/>
<circle cx="397.6" cy="59.4" r="1.8" fill="#f2c450"/><rect x="397" y="61.2" width="1.2" height="1.2" fill="#e4e4e4"/>
<path d="M403.4 57.0 l2.4 -2.2 h5 l-2.4 2.2 Z" fill="#dcdcdc"/>
<path d="M403.4 57.6 h5 v3 h-5 Z" fill="#bdbdbd"/><path d="M403.4 59.2 h5 v1.6 h-5 Z" fill="#4aa2ee"/><path d="M408.4 57.6 l2.4 -2.2 v3 l-2.4 2.4 Z" fill="#8a8a8a"/>
<path d="M408.6 62.6 l2.8 -3" stroke="#efefef" stroke-width="0.9"/>
<path d="M416.4 57.0 l2.4 -2.2 h5 l-2.4 2.2 Z" fill="#dcdcdc"/>
<path d="M416.4 57.6 h5 v3 h-5 Z" fill="#bdbdbd"/><path d="M416.4 59.2 h5 v1.6 h-5 Z" fill="#9a9a9a"/><path d="M421.4 57.6 l2.4 -2.2 v3 l-2.4 2.4 Z" fill="#8a8a8a"/>
<path d="M423 58.2 l0.8 1.6 l1.8 0.4 l-1.4 1.2 l0.4 1.8 l-1.6 -1 l-1.6 1 l0.4 -1.8 l-1.4 -1.2 l1.8 -0.4 Z" fill="#f2b030"/>
<path d="M429.0 57.4 l2.4 -2.2 h5 l-2.4 2.2 Z" fill="#dcdcdc"/>
<rect x="433" y="59.6" width="3.8" height="3" fill="#f2c450"/><path d="M435 59.6 v-0.8 a1 1 0 0 1 2 0" fill="none" stroke="#f2c450" stroke-width="0.6"/>
<path d="M441.6 45.4 l2 -1.6 h6.4 l-2 1.6 Z" fill="#4aa2ee"/><path d="M441.6 45.8 h6.4 v1.2 h-6.4 Z M441.6 47.6 h6.4 v1.2 h-6.4 Z M441.6 49.4 h6.4 v1 h-6.4 Z" fill="#e4e4e4"/><path d="M448.4 45.6 l1.8 -1.6 v4.8 l-1.8 1.6 Z" fill="#a8a8a8"/><circle cx="445.4" cy="42.6" r="1.5" fill="#dcdcdc"/>
<path d="M441.6 57.6 l2 -1.8 h5.6 l-2 1.8 Z" fill="#dcdcdc"/><path d="M441.6 58.2 h5.6 v1.2 h-5.6 Z M441.6 60 h4.4 v1.2 h-4.4 Z" fill="#c4c4c4"/><path d="M446 59.6 l2.6 2.8 l1.6 -1.4 l-2.6 -2.8 Z" fill="#f2c450"/><path d="M448.4 58 l1.4 -0.6 l0.8 1 l-0.8 1.2 Z" fill="#f4f4f4"/>
<path d="M511.2 26.8 H518.4 L520 28.4 V39.2 H511.2 Z" fill="#6db6f6"/><path d="M518.4 26.8 V28.4 H520 Z" fill="#e8f2fc"/>
<rect x="503.6" y="32" width="11.2" height="8" fill="#777" stroke="#c8c8c8" stroke-width="0.8"/><rect x="503" y="39.2" width="1.4" height="1.4" fill="#e4e4e4"/><circle cx="514.6" cy="39.2" r="3.6" fill="#6a6a6a" fill-opacity="0.6" stroke="#c8c8c8" stroke-width="0.8"/><path d="M514.6 35.6 v3.6 h-3.6" stroke="#c8c8c8" stroke-width="0.6" fill="none"/>
<path d="M524.6 33.6 v-3 h3" fill="none" stroke="#d6d6d6" stroke-width="0.7"/><path d="M524 33.8 h3" stroke="#d6d6d6" stroke-width="0.7"/><circle cx="529.4" cy="33.4" r="1.7" fill="#6a6a6a" stroke="#d6d6d6" stroke-width="0.6"/>
<path d="M530.6 28.2 l0.8 1.6 l1.7 0.3 l-1.3 1.2 l0.4 1.7 l-1.6 -0.9 l-1.6 0.9 l0.4 -1.7 l-1.3 -1.2 l1.7 -0.3 Z" fill="#f2c450"/>
<path d="M524.6 47.0 v-3 h3" fill="none" stroke="#d6d6d6" stroke-width="0.7"/><path d="M524 47.199999999999996 h3" stroke="#d6d6d6" stroke-width="0.7"/><circle cx="529.4" cy="46.8" r="1.7" fill="#6a6a6a" stroke="#d6d6d6" stroke-width="0.6"/>
<path d="M528.8 44.6 l2.6 -2.6 l1 1 l-2.6 2.6 Z" fill="#f2c450"/><circle cx="532.4" cy="42" r="0.9" fill="#d04848"/>
<path d="M524.6 55.6 h4.4 v3 l-3 3 l-3 -3 v-1.6 Z" fill="none" stroke="#efefef" stroke-width="0.9"/><path d="M528.4 57.8 l2.6 -2.6 l1 1 l-2.6 2.6 Z" fill="#f2c450"/><circle cx="532.2" cy="54.8" r="0.9" fill="#d04848"/>
<rect x="595.6" y="27.6" width="10.2" height="15.2" fill="#e6e6e6"/><rect x="597" y="29" width="7" height="5.6" fill="#6db6f6" stroke="#3a80c8" stroke-width="0.4"/><path d="M597.4 37.6 h7 M597.4 40.4 h7" stroke="#666" stroke-width="0.5"/><path d="M599.4 36.6 v2 M601.8 39.4 v2" stroke="#444" stroke-width="0.8"/>
<path d="M603 40.6 L605 38.6 L609.4 43 L607.4 45 Z" fill="#f2c450"/><path d="M605.6 38 L608.4 35.6 L611.4 38.8 L609 41.4 Z" fill="#f2f2f2"/>
<circle cx="625" cy="32.3" r="4.2" fill="#4a90d8"/><path d="M625 32.3 L625 28.1 A4.2 4.2 0 0 1 629.2 32.3 Z" fill="#f0c840"/><path d="M625 32.3 L629.2 32.3 A4.2 4.2 0 0 1 626.4 36.2 Z" fill="#d05048"/><path d="M625 32.3 L626.4 36.2 A4.2 4.2 0 0 1 622.4 35.6 Z" fill="#9848b0"/><path d="M622 30.4 q1.4 1.8 0.6 3.6" stroke="#9cd0f4" stroke-width="0.7" fill="none"/>
<path d="M620.6 40.6 h8.4" stroke="#cfcfcf" stroke-width="0.5"/><path d="M620.6 42.6 h8.4" stroke="#dcdcdc" stroke-width="0.9"/><path d="M620.6 45 h8.4" stroke="#e8e8e8" stroke-width="1.3"/><path d="M620.6 48 h8.4" stroke="#f2f2f2" stroke-width="1.8"/>
<path d="M620.6 55.4 h8.4" stroke="#cfcfcf" stroke-width="0.7" stroke-dasharray="1 0.8"/><path d="M620.6 58 h8.4" stroke="#cfcfcf" stroke-width="0.8"/><path d="M620.6 60.8 h8.4" stroke="#cfcfcf" stroke-width="0.8" stroke-dasharray="2.2 0.8"/>
<path d="M733 29.6 H730.4 V44.4 H733 M740 44.4 H742.4 V37" fill="none" stroke="#ececec" stroke-width="1.1"/><rect x="734" y="32" width="5" height="3.6" fill="#4aa2ee"/><circle cx="735.6" cy="40" r="2.5" fill="#8a8a8a" stroke="#bdbdbd" stroke-width="0.8"/>
<path d="M742.6 28 l1 3 l3 -0.8 l-2 2.4 l2 2.4 l-3 -0.8 l-1 3 l-1 -3 l-3 0.8 l2 -2.4 l-2 -2.4 l3 0.8 Z" fill="#f2c450"/>
<rect x="753.4" y="29.4" width="3.6" height="2.6" fill="#4aa2ee"/><circle cx="755" cy="34.2" r="1.6" fill="#8a8a8a" stroke="#bdbdbd" stroke-width="0.5"/><path d="M757.6 30.4 l3 4 M760.6 30.4 l-3 4" stroke="#d83030" stroke-width="1"/><path d="M759.4 28.4 h1.4 v7.8 h-1.4" fill="none" stroke="#d6d6d6" stroke-width="0.5"/>
<path d="M753.8 42 h-1.4 v7.4 h1.4 M757.4 42 h1.2 v4" fill="none" stroke="#d6d6d6" stroke-width="0.7"/><rect x="754.4" y="43" width="2.8" height="2" fill="#4aa2ee"/><circle cx="755.4" cy="47.4" r="1.4" fill="#8a8a8a" stroke="#bdbdbd" stroke-width="0.5"/><path d="M756.8 49.6 l3 -3 l1 1 l-3 3 Z" fill="#f2c450"/><circle cx="761" cy="46" r="0.8" fill="#d04848"/>
<path d="M753.6 54.6 h-1.4 v7.4 h1.4 M760.4 54.6 h1.4 v7.4 h-1.4" fill="none" stroke="#cfe4f8" stroke-width="0.7"/><rect x="754.2" y="55.4" width="5.6" height="5.8" fill="#5a9ad8" stroke="#a8d0f4" stroke-width="0.4" stroke-dasharray="0.8 0.6"/><path d="M757 56.6 v5.4 l1.2 -1.2 l1 2 l0.8 -0.4 l-1 -2 h1.7 Z" fill="#f4f4f4"/>
<path d="M776.6 32 V37.6 M791.6 32 V37.6" stroke="#d6d6d6" stroke-width="0.7"/><path d="M777.6 34.6 H790.6" stroke="#d6d6d6" stroke-width="0.6"/><path d="M777 34.6 l1.8 -0.9 v1.8 Z M791.2 34.6 l-1.8 -0.9 v1.8 Z" fill="#d6d6d6"/><rect x="776" y="37.8" width="15.8" height="3" fill="#f0c848"/><path d="M778 37.8 v1.4 M780 37.8 v1.4 M782 37.8 v1.4 M784 37.8 v1.4 M786 37.8 v1.4 M788 37.8 v1.4 M790 37.8 v1.4" stroke="#a88420" stroke-width="0.4"/>
<path d="M804 30.4 v5.6 l1.3 -1.2 l1 2 l0.8 -0.4 l-1 -2 h1.8 Z" fill="#f4f4f4"/><rect x="807.6" y="32.4" width="5" height="4.2" fill="#f4f4f4"/><rect x="808.6" y="33.2" width="2.6" height="2.6" fill="#4aa2ee"/><path d="M807.6 28.4 l0.5 1.2 l1.2 0.2 l-0.9 0.8 l0.3 1.2 l-1.1 -0.7 l-1.1 0.7 l0.3 -1.2 l-0.9 -0.8 l1.2 -0.2 Z" fill="#f2c450"/>
<rect x="804.6" y="42.4" width="6.6" height="6.4" fill="#4a88c8" stroke="#9cc8f0" stroke-width="0.4" stroke-dasharray="0.8 0.6"/><path d="M806.4 47.6 v-3.4 l-0.8 0.8 M808 43.6 v4" stroke="#f0f0f0" stroke-width="0.7" fill="none"/><path d="M809 44.4 v5.6 l1.3 -1.2 l1 2 l0.8 -0.4 l-1 -2 h1.8 Z" fill="#f4f4f4"/>
<rect x="805" y="54.6" width="6.8" height="8" fill="#9a9a9a" stroke="#d4d4d4" stroke-width="0.7"/><rect x="806" y="55.6" width="4.8" height="1.6" fill="#e6e6e6"/><path d="M806 58.6 h4.8 M806 60.2 h4.8 M806 61.6 h4.8 M807.6 58 v4.2 M809.2 58 v4.2" stroke="#dcdcdc" stroke-width="0.5"/>
<rect x="823.8" y="29.2" width="11.8" height="13.6" fill="#e2b264"/><path d="M827.6 29.6 q2 -3 4.2 0 Z" fill="#f2f2f2"/><rect x="826.6" y="29.2" width="6.2" height="1.2" fill="#f2f2f2"/><path d="M828 33 H835.6 L838 35.4 V45 H828 Z" fill="#dedede"/><path d="M835.6 33 V35.4 H838 Z" fill="#f8f8f8"/>
<path d="M847.2 28.4 h5.4 v6.8 h-5.4 Z" fill="none" stroke="#d4d4d4" stroke-width="0.7"/><path d="M848.2 30 h3.4 M848.2 31.6 h3.4 M848.2 33.2 h2" stroke="#d4d4d4" stroke-width="0.6"/><path d="M851.4 33 l3.4 3.4 M854.8 33 l-3.4 3.4" stroke="#e4e4e4" stroke-width="0.8"/>
<path d="M847.4 41.6 h3.6 l1.4 1.4 v4.6 h-5 Z" fill="#a8a8a8"/><path d="M849.6 43.6 h3.6 l1.4 1.4 v5 h-5 Z" fill="#d8d8d8"/>
<path d="M867 30 H874.8 V35 H884.2 V42.8 H867 Z" fill="#dedede"/>
</svg>
<!--ICONS-END-->
<div class="abs" style="left:22px;top:12px;width:165px;height:1px;background:#4a4040;"></div><div class="abs" style="left:699px;top:12px;width:238.5px;height:1px;background:#4a4040;"></div>
<div id="qat" class="abs"></div>
<svg class="abs" style="left:22px;top:0;" width="166" height="13" viewBox="22 0 166 13">
<!-- new -->
<path d="M27 2.6 H33 L35.2 4.6 V10.4 H27 Z" fill="#fbfbfb"/><path d="M33 2.6 V4.6 H35.2" fill="#cfcfcf"/>
<!-- open -->
<path d="M39.6 3.6 H43 L44 4.6 H47.4 V10 H39.6 Z" fill="#d8dde2"/><path d="M40.4 10 L42.2 6 H49 L47.2 10 Z" fill="#f2f4f7"/>
<!-- save -->
<rect x="52.4" y="2.4" width="8.4" height="8.4" fill="#d0d0d0"/><rect x="54" y="2.4" width="5.2" height="3" fill="#f7f7f7"/><rect x="54" y="7.4" width="5.2" height="3.4" fill="#f7f7f7"/>
<!-- saveas -->
<rect x="65.4" y="2.4" width="8.4" height="8.4" fill="#d0d0d0"/><rect x="67" y="2.4" width="5.2" height="3" fill="#f7f7f7"/><rect x="67" y="7.4" width="4" height="3.4" fill="#f7f7f7"/><path d="M69.6 9.8 L73.4 5.8 L74.6 7 L70.8 10.8 Z" fill="#e0b040"/><path d="M73.4 5.8 L74 5.2 L75.2 6.4 L74.6 7 Z" fill="#d04030"/>
<!-- web open -->
<rect x="79" y="2.4" width="4.6" height="8.6" fill="#5c5c5c"/><rect x="79.6" y="9.4" width="3.4" height="1" fill="#d0d0d0"/><path d="M82.6 7.4 H85 L85.6 8 H86.8 V10.8 H82.6 Z" fill="#e8c050"/>
<!-- web save -->
<rect x="93.4" y="2.6" width="4.6" height="8.4" fill="#5c5c5c"/><rect x="94" y="9.4" width="3.4" height="1" fill="#d0d0d0"/><path d="M92 4 q2.4 -1.6 4.4 0.4 l-0.6 -1.8 M92 4 l2 0.6" stroke="#3f95dd" stroke-width="1" fill="none"/>
<!-- print -->
<rect x="105" y="2" width="5.6" height="3" fill="#fafafa"/><rect x="103.2" y="4.4" width="9.2" height="4.4" rx="0.8" fill="#f1f1f1"/><rect x="105" y="7.6" width="5.6" height="3.2" fill="#fafafa"/><rect x="105.6" y="8.4" width="4.4" height="1.6" fill="#4fa3e6"/>
<!-- undo -->
<path d="M116.6 6 L120.6 3.4 V5 Q124.4 5 125.4 8 Q123.4 6.8 120.6 7 V8.6 Z" fill="#e4e4e4"/>
<path d="M128.8 5.2 h3.2 l-1.6 1.8 Z" fill="#e8e8e8"/>
<!-- redo -->
<path d="M144.2 6 L140.2 3.4 V5 Q136.4 5 135.4 8 Q137.4 6.8 140.2 7 V8.6 Z" fill="#bdbdbd"/>
<path d="M147.6 5.2 h3.2 l-1.6 1.8 Z" fill="#c4c4c4"/>
<!-- match prop -->
<rect x="155" y="2.2" width="5.6" height="8.2" fill="#ececec"/><rect x="156" y="3" width="3.6" height="2.6" fill="#4fa3e6"/><path d="M155.8 7 h3.4 M155.8 8.6 h3.4" stroke="#666" stroke-width="0.6"/><path d="M158.6 7.6 L160 6.4 L163 9.4 L161.6 10.6 Z" fill="#e8b840"/>
<!-- print2 -->
<rect x="169" y="1.8" width="5.6" height="3" fill="#fafafa"/><rect x="167.2" y="4.2" width="9.2" height="4.2" rx="0.8" fill="#f1f1f1"/><rect x="169" y="7.2" width="5.6" height="3" fill="#fafafa"/><rect x="170.6" y="8" width="5.2" height="2" fill="#3f8ed8"/>
<!-- customize -->
<rect x="180" y="3.8" width="5" height="0.9" fill="#f2f2f2"/><path d="M180 5.6 h5 l-2.5 2.4 Z" fill="#f2f2f2"/>
</svg>
<div id="abtn" class="abs"></div>
<div class="t" style="left:2.4px;top:-1.1px;font-size:19px;font-weight:bold;color:#c21214;line-height:20px;height:20px;width:14px;transform:scaleX(0.96);transform-origin:left;">A</div>
<div class="dd" style="left:16.5px;top:9.2px;background:#222;"></div>

<!-- ================= FILE TABS ================= -->
<div id="filetabs" class="abs"></div>
<div class="abs" style="left:0;top:77px;width:12px;height:13.2px;background:#2e2e2e;"></div><div class="abs" style="left:0;top:90px;width:1024px;height:2.4px;background:#4b4b4b;"></div>
<svg class="abs" style="left:0;top:76px;" width="700" height="16" viewBox="0 76 700 16">
<path d="M7 90.4 C11.5 90.4 11.5 78.6 16 78.6 H73 C76.5 78.6 76.5 90.4 80 90.4 Z" fill="#4b4b4b" stroke="#2a2a2a" stroke-width="0.5"/>
<path d="M74 90.4 C78.5 90.4 78.5 78.6 83 78.6 H173 C176.5 78.6 176.5 90.4 180 90.4 Z" fill="#4b4b4b" stroke="#2a2a2a" stroke-width="0.5"/>
<path d="M174 90.4 C178.5 90.4 178.5 78.6 183 78.6 H275.5 C279.0 78.6 279.0 90.4 282.5 90.4 Z" fill="#4b4b4b" stroke="#2a2a2a" stroke-width="0.5"/>
<path d="M276.5 90.4 C281.0 90.4 281.0 78.6 285.5 78.6 H366 C369.5 78.6 369.5 90.4 373 90.4 Z" fill="#4b4b4b" stroke="#2a2a2a" stroke-width="0.5"/>
<path d="M367 90.4 C371.5 90.4 371.5 78.6 376 78.6 H451 C454.5 78.6 454.5 90.4 458 90.4 Z" fill="#4b4b4b" stroke="#2a2a2a" stroke-width="0.5"/>
<path d="M452 90.4 C456.5 90.4 456.5 78.6 461 78.6 H541 C544.5 78.6 544.5 90.4 548 90.4 Z" fill="#4b4b4b" stroke="#2a2a2a" stroke-width="0.5"/>
<path d="M542 90.4 C546.5 90.4 546.5 78.6 551 78.6 H648 C651.5 78.6 651.5 90.4 655 90.4 Z" fill="#636363" stroke="#2a2a2a" stroke-width="0.5"/>
<path d="M654 90 C656 90 656 80.6 659 80.6 H663 C666.5 80.6 666.5 90 668.5 90 Z" fill="#4f4f4f"/>
<path d="M657.2 85.4 h4 M659.2 83.4 v4" stroke="#e6e6e6" stroke-width="1"/>
<path d="M167.4 83.0 l3.2 3.2 M170.6 83.0 l-3.2 3.2" stroke="#2a2a2a" stroke-width="0.9"/>
<path d="M269.4 83.0 l3.2 3.2 M272.6 83.0 l-3.2 3.2" stroke="#2a2a2a" stroke-width="0.9"/>
<path d="M360.4 83.0 l3.2 3.2 M363.6 83.0 l-3.2 3.2" stroke="#2a2a2a" stroke-width="0.9"/>
<path d="M444.4 83.0 l3.2 3.2 M447.6 83.0 l-3.2 3.2" stroke="#2a2a2a" stroke-width="0.9"/>
<path d="M535.9 83.0 l3.2 3.2 M539.1 83.0 l-3.2 3.2" stroke="#2a2a2a" stroke-width="0.9"/>
<path d="M639.4 83.0 l3.2 3.2 M642.6 83.0 l-3.2 3.2" stroke="#333" stroke-width="0.9"/>
</svg>
<div class="t" style="left:17.2px;top:80.6px;font-size:6.5px;color:#cfcfcf;letter-spacing:-0.147px">Start</div>
<div class="t" style="left:83.2px;top:80.6px;font-size:6.5px;color:#b9b9b9;word-spacing:0.9px;letter-spacing:-0.533px">A H U - FCU COOLING COIL</div>
<div class="t" style="left:183.2px;top:80.6px;font-size:6.5px;color:#b9b9b9;word-spacing:0.9px;letter-spacing:-0.624px">ACCESS DOOR ( WALL TYPE)</div>
<div class="t" style="left:285.6px;top:80.6px;font-size:6.5px;color:#b9b9b9;word-spacing:0.9px;letter-spacing:-0.493px">BALCONY DRAIN DETAIL</div>
<div class="t" style="left:376.6px;top:80.6px;font-size:6.5px;color:#b9b9b9;word-spacing:0.9px;letter-spacing:-0.507px">CATCH BASIN DETAIL*</div>
<div class="t" style="left:460.6px;top:80.6px;font-size:6.5px;color:#b9b9b9;word-spacing:0.9px;letter-spacing:-0.674px">CONCRETE PROTECTION</div>
<div class="t" style="left:551.6px;top:80.6px;font-size:6.5px;color:#f4f4f4;word-spacing:1.6px;letter-spacing:-0.551px">DIAGRAM-FRESH AIR RISER*</div>

<!-- ================= STATUS BAR ================= -->
<div id="status" class="abs"></div>
<div class="abs" style="left:342px;top:535.6px;width:682px;height:13.4px;background:#545454;border-left:0.6px solid #686868;border-top:0.6px solid #5e5e5e;box-sizing:border-box;"></div>
<svg class="abs" style="left:0;top:535px;" width="110" height="14" viewBox="0 535 110 14">
<defs><linearGradient id="mg" x1="0" y1="0" x2="0" y2="1"><stop offset="0" stop-color="#5a5a5a"/><stop offset="1" stop-color="#7c7c7c"/></linearGradient></defs>
<path d="M5 545 C8 545 8 536.6 11 536.6 H34 C37.5 536.6 37.5 545 40 545 Z" fill="url(#mg)"/>
<path d="M36 545 C39.5 545 39.5 536.6 42.5 536.6 H81.5 C84.6 536.6 84.6 545 87 545 Z" fill="#4f4f4f"/>
<path d="M82.5 545 C86 545 86 536.6 88.6 536.6 H94 C97.2 536.6 97.2 545 99.4 545 Z" fill="#4f4f4f"/>
<path d="M88.4 540.7 h4.4 M90.6 538.5 v4.4" stroke="#e6e6e6" stroke-width="1"/>
</svg>
<div class="t" style="left:12.8px;top:536.6px;font-size:6.3px;font-weight:bold;color:#fff;letter-spacing:-0.041px">Model</div>
<div class="t" style="left:43.2px;top:536.6px;font-size:6.3px;color:#9b9b9b;letter-spacing:-0.031px">V-08-AC-09</div>
<div class="t" style="left:350.4px;top:539.5px;font-size:6.4px;color:#e4e4e4;letter-spacing:0.067px">130469.5440, -53237.2893, 0.0000</div>
<div class="t" style="left:459.2px;top:539.5px;font-size:6.4px;color:#e4e4e4;letter-spacing:-0.547px">MODEL</div>
<div class="t" style="left:794px;top:539.5px;font-size:6.4px;color:#e4e4e4;letter-spacing:-0.216px">1:1 / 100%</div>
<div class="t" style="left:883.2px;top:539.5px;font-size:6.4px;color:#e4e4e4;letter-spacing:-0.071px">Decimal</div>
<!--STATUS-ICONS-->
<svg class="abs" style="left:440px;top:536px;" width="584" height="13" viewBox="440 536 584 13">
<rect x="455.7" y="537" width="0.6" height="11" fill="#5e5e5e"/>
<rect x="481.7" y="537" width="0.6" height="11" fill="#5e5e5e"/>
<rect x="518.2" y="537" width="0.6" height="11" fill="#5e5e5e"/>
<rect x="695.7" y="537" width="0.6" height="11" fill="#5e5e5e"/>
<rect x="750.7" y="537" width="0.6" height="11" fill="#5e5e5e"/>
<rect x="830.7" y="537" width="0.6" height="11" fill="#5e5e5e"/>
<rect x="852.7" y="537" width="0.6" height="11" fill="#5e5e5e"/>
<rect x="866.7" y="537" width="0.6" height="11" fill="#5e5e5e"/>
<rect x="919.7" y="537" width="0.6" height="11" fill="#5e5e5e"/>
<rect x="931.7" y="537" width="0.6" height="11" fill="#5e5e5e"/>
<rect x="955.7" y="537" width="0.6" height="11" fill="#5e5e5e"/>
<rect x="994.7" y="537" width="0.6" height="11" fill="#5e5e5e"/>
<path d="M485 540.6 h8 M485 542.6 h8 M485 544.6 h8 M486.8 538.6 v8 M489 538.6 v8 M491.2 538.6 v8" stroke="#e2e2e2" stroke-width="0.7"/>
<rect x="499.6" y="539.6" width="1" height="1" fill="#e2e2e2"/>
<rect x="499.6" y="542.0" width="1" height="1" fill="#e2e2e2"/>
<rect x="499.6" y="544.4" width="1" height="1" fill="#e2e2e2"/>
<rect x="502.0" y="539.6" width="1" height="1" fill="#e2e2e2"/>
<rect x="502.0" y="542.0" width="1" height="1" fill="#e2e2e2"/>
<rect x="502.0" y="544.4" width="1" height="1" fill="#e2e2e2"/>
<rect x="504.4" y="539.6" width="1" height="1" fill="#e2e2e2"/>
<rect x="504.4" y="542.0" width="1" height="1" fill="#e2e2e2"/>
<rect x="504.4" y="544.4" width="1" height="1" fill="#e2e2e2"/>
<path d="M512.0 541.8000000000001 h3 l-1.5 1.7 Z" fill="#e2e2e2"/>
<path d="M522 546 v-3.4 h3.4 v-3.4 h3.4" fill="none" stroke="#e2e2e2" stroke-width="0.8"/><rect x="521.4" y="543.4" width="2.6" height="2.6" fill="#e2e2e2"/><rect x="525.6" y="538.4" width="3" height="2" fill="#e2e2e2"/>
<rect x="532.8" y="537" width="11.800000000000068" height="11" fill="#4484c5"/>
<rect x="537" y="543.2" width="5.6" height="2.2" fill="#fff"/><path d="M535.6 541 l1.4 -1.6 l1.4 1.6 Z" fill="#fff"/><path d="M534.6 541.6 h4" stroke="#fff" stroke-width="0.7"/>
<rect x="546" y="537" width="12" height="11" fill="#4484c5"/>
<path d="M548.6 538.6 v7.2 h7.4" fill="none" stroke="#fff" stroke-width="0.9"/><path d="M550.6 545.8 v-2 h2" fill="none" stroke="#cfe0f0" stroke-width="0.5"/>
<circle cx="563.4" cy="542.8" r="3" fill="none" stroke="#e2e2e2" stroke-width="0.8"/><path d="M563.4 542.8 h4.8 M563.4 542.8 l3.4 -3.6" stroke="#e2e2e2" stroke-width="0.7"/>
<path d="M573.5 541.8000000000001 h3 l-1.5 1.7 Z" fill="#e2e2e2"/>
<path d="M585.4 538.4 v8.4" stroke="#e2e2e2" stroke-width="0.8"/><path d="M582 539 l7 7" stroke="#d04030" stroke-width="0.8"/><path d="M582 546 l3.4 -2 l3.4 2" stroke="#58a858" stroke-width="0.7" fill="none"/>
<path d="M594.5 541.8000000000001 h3 l-1.5 1.7 Z" fill="#e2e2e2"/>
<rect x="601" y="537" width="11.600000000000023" height="11" fill="#4484c5"/>
<path d="M603 546 h8 M603 546 l6.6 -6" stroke="#fff" stroke-width="0.9"/><path d="M609.6 539 v2" stroke="#fff" stroke-width="0.6"/>
<rect x="614" y="537" width="12" height="11" fill="#4484c5"/>
<rect x="617" y="540" width="6.4" height="6" fill="none" stroke="#fff" stroke-width="0.9"/><rect x="616" y="539" width="2" height="2" fill="#4484c5" stroke="#fff" stroke-width="0.6"/>
<path d="M628.7 541.8000000000001 h3 l-1.5 1.7 Z" fill="#e2e2e2"/>
<path d="M637 539.4 h8" stroke="#e2e2e2" stroke-width="0.6"/><path d="M637 541.6 h8" stroke="#e2e2e2" stroke-width="1"/><path d="M637 544 h8" stroke="#e2e2e2" stroke-width="1.4"/><path d="M637 546.4 h4.4" stroke="#e2e2e2" stroke-width="1"/>
<rect x="648.5" y="537" width="11.5" height="11" fill="#4484c5"/>
<rect x="650.4" y="538.6" width="2" height="2" fill="#f4f4f4"/>
<rect x="650.4" y="542.6" width="2" height="2" fill="#f4f4f4"/>
<rect x="652.4" y="540.6" width="2" height="2" fill="#f4f4f4"/>
<rect x="652.4" y="544.6" width="2" height="2" fill="#f4f4f4"/>
<rect x="654.4" y="538.6" width="2" height="2" fill="#f4f4f4"/>
<rect x="654.4" y="542.6" width="2" height="2" fill="#f4f4f4"/>
<rect x="656.4" y="540.6" width="2" height="2" fill="#f4f4f4"/>
<rect x="656.4" y="544.6" width="2" height="2" fill="#f4f4f4"/>
<rect x="664.6" y="541" width="5" height="5" fill="#7fae9e" stroke="#e2e2e2" stroke-width="0.5"/><rect x="666" y="542.6" width="2.4" height="2.4" fill="#e8c040"/><path d="M662.4 538.6 l3 3" stroke="#e2e2e2" stroke-width="0.8"/>
<path d="M677 541.4 l2.4 -2.4 h5 v5 l-2.4 2.4 h-5 Z M677 541.4 h5 v5 M682 541.4 l2.4 -2.4" fill="none" stroke="#e2e2e2" stroke-width="0.6"/><circle cx="677.4" cy="546" r="1.2" fill="#c07840"/>
<path d="M690.1 541.8000000000001 h3 l-1.5 1.7 Z" fill="#e2e2e2"/>
<rect x="697.5" y="537" width="12.100000000000023" height="11" fill="#4484c5"/>
<path d="M700.6 539 v7 h5" fill="none" stroke="#fff" stroke-width="0.9"/><path d="M700.6 539 l-1.2 1.6 h2.4 Z M706 544.6 l1.8 1.4 l-1.8 1.4 Z" fill="#fff"/><path d="M703 540 l2.6 2.4 l-1.4 0.4 Z" fill="#fff"/>
<path d="M713.4 540.6 l1.8 -1.8 h4.6 v4.6 l-1.8 1.8 h-4.6 Z" fill="none" stroke="#e2e2e2" stroke-width="0.6"/><rect x="712.8" y="540" width="1.2" height="1.2" fill="#4fa0e0"/><rect x="717.4" y="544.6" width="1.2" height="1.2" fill="#4fa0e0"/><rect x="712.8" y="544.6" width="1.2" height="1.2" fill="#4fa0e0"/><rect x="719.2" y="538.2" width="1.2" height="1.2" fill="#4fa0e0"/>
<path d="M725.1 541.8000000000001 h3 l-1.5 1.7 Z" fill="#e2e2e2"/>
<rect x="731" y="537" width="12" height="11" fill="#4484c5"/>
<circle cx="737" cy="542.8" r="3.6" fill="none" stroke="#fff" stroke-width="0.7"/><path d="M737 538.4 v4.4 l-3 2.6 M737 542.8 l3 2.6" stroke="#fff" stroke-width="0.8" fill="none"/>
<path d="M746.1 541.8000000000001 h3 l-1.5 1.7 Z" fill="#e2e2e2"/>
<rect x="753.5" y="537" width="11.700000000000045" height="11" fill="#4484c5"/>
<path d="M759.2 538.4 v4.6 l-3.4 3.4 M759.2 543 l3.4 3.4" stroke="#fff" stroke-width="1.2" fill="none"/><circle cx="762.6" cy="540" r="1.2" fill="none" stroke="#fff" stroke-width="0.5"/>
<path d="M771.4 538.6 v4.4 l-3.2 3.4 M771.4 543 l3.2 3.4" stroke="#e2e2e2" stroke-width="1.1" fill="none"/><path d="M773.6 539.4 h2.2 M774.7 538.3 v2.2" stroke="#e2e2e2" stroke-width="0.5"/>
<path d="M785 538.6 v4.4 l-3.2 3.4 M785 543 l3.2 3.4" stroke="#e2e2e2" stroke-width="1.1" fill="none"/>
<path d="M825.1 541.8000000000001 h3 l-1.5 1.7 Z" fill="#e2e2e2"/>
<circle cx="838" cy="542.6" r="2.2" fill="none" stroke="#e2e2e2" stroke-width="1.4"/><path d="M838 538.8 v7.6 M834.2 542.6 h7.6 M835.3 539.9 l5.4 5.4 M840.7 539.9 l-5.4 5.4" stroke="#e2e2e2" stroke-width="0.9"/><circle cx="838" cy="542.6" r="1" fill="#545454"/>
<path d="M847.1 541.8000000000001 h3 l-1.5 1.7 Z" fill="#e2e2e2"/>
<path d="M855.6 542.6 h8 M859.6 538.6 v8" stroke="#e2e2e2" stroke-width="0.9"/>
<rect x="873" y="538.4" width="3" height="8.6" fill="#e2e2e2"/><path d="M873 540 h1.4 M873 541.6 h1.4 M873 543.2 h1.4 M873 544.8 h1.4" stroke="#545454" stroke-width="0.5"/>
<path d="M914.1 541.8000000000001 h3 l-1.5 1.7 Z" fill="#e2e2e2"/>
<rect x="923.2" y="538.6" width="5.6" height="8" fill="none" stroke="#e2e2e2" stroke-width="0.7"/><path d="M924.4 540.6 h3.2 M924.4 542.4 h3.2 M924.4 544.2 h3.2" stroke="#e2e2e2" stroke-width="0.6"/>
<rect x="935.6" y="539" width="7.6" height="5.4" fill="none" stroke="#e2e2e2" stroke-width="0.8"/><path d="M938 546.4 h3" stroke="#e2e2e2" stroke-width="0.8"/><rect x="941" y="543" width="2.6" height="3" fill="#e2e2e2"/>
<path d="M949.5 541.8000000000001 h3 l-1.5 1.7 Z" fill="#e2e2e2"/>
<rect x="959" y="538.6" width="2.4" height="2.4" fill="none" stroke="#e2e2e2" stroke-width="0.6"/><circle cx="965" cy="540" r="1.3" fill="none" stroke="#e2e2e2" stroke-width="0.6"/><path d="M960.4 546.6 l1.8 -3 l1.8 3 Z" fill="none" stroke="#e2e2e2" stroke-width="0.6"/>
<rect x="970" y="537" width="12.600000000000023" height="11" fill="#4484c5"/>
<circle cx="976.3" cy="542.6" r="3.8" fill="#a8c8e8" stroke="#fff" stroke-width="0.7"/><path d="M973.6 545 l5 -5" stroke="#fff" stroke-width="0.7"/>
<rect x="986.2" y="538.4" width="4.6" height="6.6" fill="#6fa8e0"/><path d="M986 545 q2.6 -2.6 5.4 0 v1.6 h-5.4 Z" fill="#e8d040"/><path d="M990.4 545.4 l1.2 1.2 l1.6 -2" stroke="#48a848" stroke-width="0.7" fill="none"/>
<rect x="999" y="539.4" width="8.4" height="6.8" fill="#8a8a8a" stroke="#c8c8c8" stroke-width="0.9"/><rect x="1001" y="541" width="3" height="1.6" fill="#4a4a4a"/><rect x="1003.4" y="543.4" width="3" height="1.6" fill="#4a4a4a"/><path d="M1000.6 544.4 l2 -2 M1005.8 540.6 l-2 2" stroke="#e2e2e2" stroke-width="0.6"/>
<path d="M1013 539.7 h8.2 M1013 543 h8.2 M1013 546.2 h8.2" stroke="#c6c6c6" stroke-width="1.1"/>
</svg>

</div>
</body>
</html>
